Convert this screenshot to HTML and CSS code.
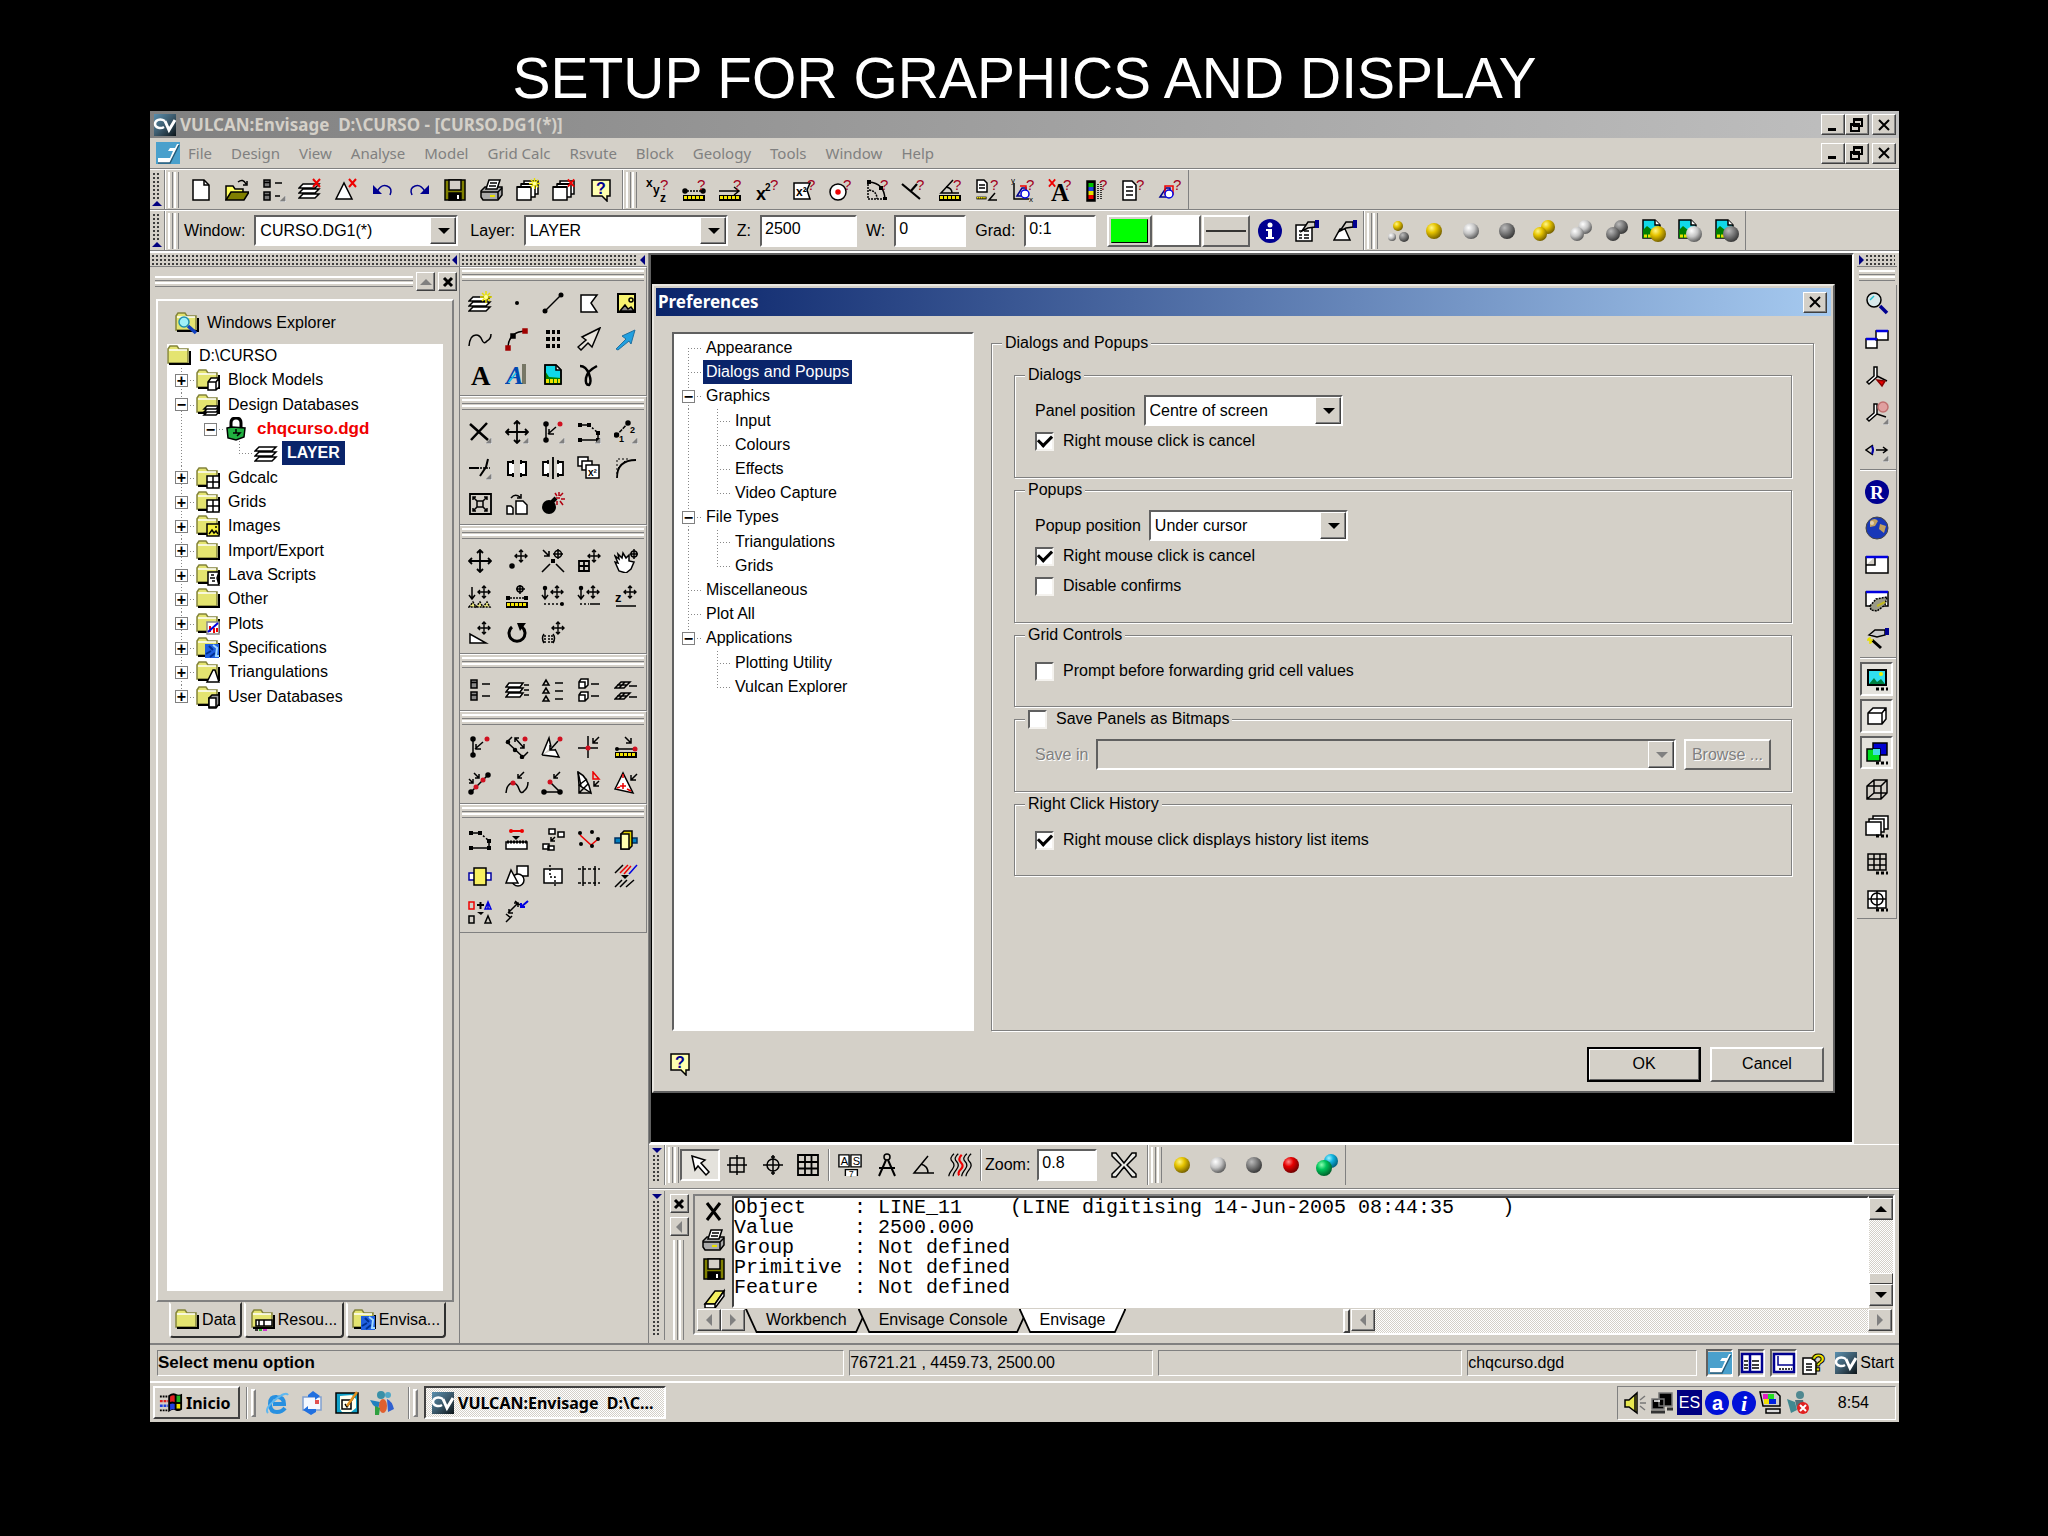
FILE: index.html
```html
<!DOCTYPE html>
<html lang="en">
  <head>
    <meta charset="UTF-8" />
    <meta name="viewport" content="width=device-width, initial-scale=1.0" />
    <title>Setup for graphics and display</title>
    <link rel="stylesheet" href="styles.css">
  </head>
  <body>
    <!-- gradients stay rendered, the symbols below do not -->
    <svg class="paints" width="0" height="0" aria-hidden="true">
      <defs>
        <radialGradient id="g-gold" cx=".35" cy=".3" r=".75"><stop offset="0" stop-color="#fff68a"/><stop offset=".4" stop-color="#e6c400"/><stop offset="1" stop-color="#6e5a00"/></radialGradient>
        <radialGradient id="g-silver" cx=".35" cy=".3" r=".75"><stop offset="0" stop-color="#fff"/><stop offset=".5" stop-color="#c4c4c4"/><stop offset="1" stop-color="#555"/></radialGradient>
        <radialGradient id="g-gray" cx=".35" cy=".3" r=".75"><stop offset="0" stop-color="#bbb"/><stop offset=".5" stop-color="#777"/><stop offset="1" stop-color="#333"/></radialGradient>
        <radialGradient id="g-red" cx=".35" cy=".3" r=".75"><stop offset="0" stop-color="#ff8a8a"/><stop offset=".4" stop-color="#e60000"/><stop offset="1" stop-color="#600"/></radialGradient>
        <radialGradient id="g-green" cx=".35" cy=".3" r=".75"><stop offset="0" stop-color="#8affb0"/><stop offset=".4" stop-color="#00c45a"/><stop offset="1" stop-color="#005a28"/></radialGradient>
        <radialGradient id="g-cyan" cx=".35" cy=".3" r=".75"><stop offset="0" stop-color="#a0f4ff"/><stop offset=".4" stop-color="#10b4e0"/><stop offset="1" stop-color="#005a78"/></radialGradient>
        <linearGradient id="g-cv" x2="1" y2="1"><stop offset="0" stop-color="#5a8fae"/><stop offset=".5" stop-color="#3c5a6c"/><stop offset="1" stop-color="#0c1418"/></linearGradient>
      </defs>
    </svg>
    <!-- icon sprite -->
    <svg class="sprite" aria-hidden="true">
      <!-- shared parts -->
      <symbol id="q" viewBox="0 0 24 24"><text x="15" y="12" class="glyph" font-size="15" fill="#a00020">?</text></symbol>
      <symbol id="corner" viewBox="0 0 24 24"><path d="M17 24h7v-7z" fill="#808080" stroke="none"/><path d="M17 24h7v-7" stroke="#fff" stroke-width="1"/></symbol>
      <symbol id="mv" viewBox="0 0 14 14"><path d="M7 1v12M1 7h12M5 3l2-2 2 2M5 11l2 2 2-2M3 5L1 7l2 2M11 5l2 2-2 2" stroke-width="1.4"/></symbol>
      <symbol id="ruler" viewBox="0 0 24 8"><path d="M1 1h22v6H1z" fill="#000" stroke="none"/><path d="M2 3.5h20" stroke="#f4e400" stroke-width="3" stroke-dasharray="3 1"/></symbol>
      <symbol id="star" viewBox="0 0 12 12"><path d="M6 0v12M0 6h12M2 2l8 8M10 2l-8 8" stroke="#e8e000" stroke-width="1.5"/><circle cx="6" cy="6" r="2" fill="#ffffa0" stroke="none"/></symbol>
      <symbol id="redx" viewBox="0 0 10 10"><path d="M1 1l7 8M8 1L1 9" stroke="#e00" stroke-width="2"/></symbol>
      <symbol id="cv" viewBox="0 0 24 24"><path d="M1 1h22v22H1z" fill="url(#g-cv)" stroke="none"/><path d="M12 8c-5-3-10-1-10 3s6 5 9 3" stroke="#fff" stroke-width="2.4"/><path d="M12 8l4 9 6-10" stroke="#fff" stroke-width="3"/></symbol>
      <symbol id="env" viewBox="0 0 24 24"><path d="M0 1h24v22H0z" fill="#4aa0cc" stroke="none"/><path d="M2 17h14l-2 5H2zM14 17l3-7h-5l2-3h5l2-4h2l-6 14z" fill="#fff" stroke="none"/><path d="M2 22h12l9-18" stroke="#245a78"/></symbol>
      <!-- main toolbar -->
      <symbol id="new" viewBox="0 0 24 24"><path d="M4 2h11l5 5v15H4z" fill="#fff"/><path d="M15 2v5h5"/></symbol>
      <symbol id="open" viewBox="0 0 24 24"><path d="M1 22V8h7l2 3h8v3" fill="#ffff60"/><path d="M1 22l5-8h18l-5 8z" fill="#808000"/><path d="M13 4q5-4 8 2M22 3v4h-4"/></symbol>
      <symbol id="dblist" viewBox="0 0 24 24"><path d="M2 2h6v7H2zM2 14h6v8H2z" fill="#777"/><path d="M2 4.500h6M2 17h6M13 5h7M13 18h5"/><use href="#corner"/></symbol>
      <symbol id="layersx" viewBox="0 0 24 24"><path d="M1 20h16l4-4H5zM1 15h16l4-4H5zM1 10h16l4-4H5z" fill="#fff"/><use href="#redx" x="14" y="0" width="10" height="10"/></symbol>
      <symbol id="trix" viewBox="0 0 24 24"><path d="M2 21h16L10 5z" fill="#fff"/><use href="#redx" x="14" y="0" width="10" height="10"/></symbol>
      <symbol id="undo" viewBox="0 0 24 24"><path d="M6 14q4-8 10-6t3 9" stroke="#000090"/><path d="M2 7v9h9z" fill="#000090" stroke="none"/></symbol>
      <symbol id="redo" viewBox="0 0 24 24"><path d="M18 14q-4-8-10-6t-3 9" stroke="#000090"/><path d="M22 7v9h-9z" fill="#000090" stroke="none"/></symbol>
      <symbol id="save" viewBox="0 0 24 24"><path d="M2 2h20v20H2z" fill="#808000"/><path d="M6 2h12v10H6z" fill="#d4d0c8"/><path d="M6 15h12v7H6z" fill="#000"/><path d="M15 17v4" stroke="#fff" stroke-width="2"/></symbol>
      <symbol id="print" viewBox="0 0 24 24"><path d="M1 13l4-4h17v8l-4 5H3l-2-3z" fill="#aaa"/><path d="M6 11l3-9h11l-3 9z" fill="#fff"/><path d="M10 5h7M9 8h7M1 14h17v7M18 14l4-4"/><path d="M10 18h5" stroke="#e8e000" stroke-width="2"/></symbol>
      <symbol id="winnew" viewBox="0 0 24 24"><path d="M8 3h14v13H8z" fill="#fff"/><path d="M5 6h14v13H5z" fill="#fff"/><path d="M1 9h14v13H1z" fill="#fff"/><path d="M1 9h14M5 6h14" stroke-width="2"/><use href="#star" x="13" y="0" width="11" height="11"/></symbol>
      <symbol id="winx" viewBox="0 0 24 24"><path d="M8 3h14v13H8z" fill="#fff"/><path d="M5 6h14v13H5z" fill="#fff"/><path d="M1 9h14v13H1z" fill="#fff"/><path d="M1 9h14M5 6h14" stroke-width="2"/><use href="#redx" x="15" y="0" width="9" height="10"/></symbol>
      <symbol id="help" viewBox="0 0 24 24"><path d="M3 2h18v16h-3v5l-5-5H3z" fill="#ffffb0"/><text x="7" y="16" class="glyph bold" font-size="16" fill="#000090">?</text></symbol>
      <!-- query toolbar -->
      <symbol id="xyz" viewBox="0 0 24 24"><text x="1" y="9" class="glyph bold" font-size="12">x</text><text x="8" y="16" class="glyph bold" font-size="12">y</text><text x="15" y="24" class="glyph bold" font-size="12">z</text><use href="#q"/></symbol>
      <symbol id="qdist" viewBox="0 0 24 24"><path d="M2 13h20" stroke-dasharray="2 1"/><circle cx="3" cy="13" r="2" fill="#000"/><circle cx="21" cy="13" r="2" fill="#000"/><use href="#ruler" y="16" width="24" height="8"/><use href="#q"/></symbol>
      <symbol id="qline" viewBox="0 0 24 24"><path d="M1 13h19M16 9l5 4-5 4"/><use href="#ruler" y="16" width="24" height="8"/><use href="#q"/></symbol>
      <symbol id="qx2" viewBox="0 0 24 24"><text x="1" y="22" class="glyph bold" font-size="18">x</text><text x="10" y="13" class="glyph bold" font-size="10">2</text><use href="#q"/></symbol>
      <symbol id="qbox" viewBox="0 0 24 24"><path d="M2 5h16l-3 7 3 9H2z" fill="#fff"/><text x="4" y="18" class="glyph bold" font-size="12">x²</text><use href="#q"/></symbol>
      <symbol id="qcirc" viewBox="0 0 24 24"><circle cx="10" cy="14" r="8" fill="#fff"/><circle cx="10" cy="14" r="2" fill="#e00" stroke="#e00"/><use href="#q"/></symbol>
      <symbol id="qarc" viewBox="0 0 24 24"><path d="M4 4q15 1 16 17"/><path d="M3 6v15h16M4 12q8 1 8 9" stroke-dasharray="2 1"/><path d="M2 2h4v4H2zM14 8h4v4h-4zM18 19h4v3h-4z" fill="#000" stroke="none"/><use href="#q"/></symbol>
      <symbol id="qperp" viewBox="0 0 24 24"><path d="M1 6l18 15M9 14L16 6" stroke-width="2.200"/><use href="#q"/></symbol>
      <symbol id="qang" viewBox="0 0 24 24"><path d="M15 2L3 15h18M8 9q6 1 6 6"/><use href="#ruler" y="16" width="24" height="8"/><use href="#q"/></symbol>
      <symbol id="qdoc2" viewBox="0 0 24 24"><path d="M2 2h7l3 3v9H2z" fill="#fff"/><path d="M4 7h6M4 10h6M22 22h-8l6-7"/><use href="#ruler" x="1" y="16" width="11" height="8"/><use href="#q"/></symbol>
      <symbol id="qplot" viewBox="0 0 24 24"><path d="M3 5v16h15"/><path d="M6 18l5-8h4v8z" stroke="#000090"/><path d="M9 8h6v7" stroke="#e00"/><circle cx="14" cy="16" r="4" fill="#fff" stroke="#0000e0"/><text x="0" y="5" class="glyph" font-size="8">y</text><text x="18" y="24" class="glyph" font-size="8">x</text><use href="#q"/></symbol>
      <symbol id="qtext" viewBox="0 0 24 24"><text x="3" y="23" class="serif" font-size="25">A</text><use href="#redx" x="0" y="0" width="9" height="10"/><use href="#q"/></symbol>
      <symbol id="qscale" viewBox="0 0 24 24"><path d="M3 3h8v20H3z" fill="#000"/><path d="M7 5v4" stroke="#00c000" stroke-width="5"/><path d="M7 9v4" stroke="#2040e0" stroke-width="5"/><path d="M7 13v4" stroke="#e8e000" stroke-width="5"/><path d="M7 17v4" stroke="#e00" stroke-width="5"/><path d="M14 6v15M17 6v15" stroke-dasharray="1 1"/><use href="#q"/></symbol>
      <symbol id="qdoc" viewBox="0 0 24 24"><path d="M2 3h9l4 4v15H2z" fill="#fff"/><path d="M5 9h7M5 13h7M5 17h7"/><use href="#q"/></symbol>
      <symbol id="qshape" viewBox="0 0 24 24"><path d="M2 19l6-9h4v9z" stroke="#000090"/><path d="M7 8h8v8H7z" stroke="#e00"/><circle cx="11" cy="16" r="4" fill="#fff" stroke="#0000e0"/><use href="#q"/></symbol>
      <!-- attributes toolbar -->
      <symbol id="line" viewBox="0 0 40 24"><path d="M0 12h40"/></symbol>
      <symbol id="info" viewBox="0 0 24 24"><circle cx="12" cy="12" r="12" fill="#000090" stroke="none"/><path d="M8 10h6v8h2v2H8v-2h2v-6H8z" fill="#fff" stroke="none"/><circle cx="12" cy="6" r="2.500" fill="#fff" stroke="none"/></symbol>
      <symbol id="docpen" viewBox="0 0 24 24"><path d="M1 6h16v16H1z" fill="#fff"/><path d="M4 12h3M9 12h5M4 16h3M9 16h5M4 19h3M9 19h5"/><path d="M7 12l6-9h7v5l-7 1z" fill="#d4d0c8"/><path d="M20 1h4v8h-4z" fill="#000090" stroke="none"/></symbol>
      <symbol id="tripen" viewBox="0 0 24 24"><path d="M1 21h16l-5-11H7z" fill="#fff"/><path d="M7 12l6-9h7v5l-7 1z" fill="#d4d0c8"/><path d="M20 1h4v8h-4z" fill="#000090" stroke="none"/></symbol>
      <!-- render balls -->
      <symbol id="b-three" viewBox="0 0 24 24"><g stroke="none"><circle cx="12" cy="7" r="5" fill="url(#g-gold)"/><circle cx="6" cy="18" r="4" fill="url(#g-silver)"/><circle cx="18" cy="18" r="5" fill="url(#g-gray)"/></g></symbol>
      <symbol id="b-gold" viewBox="0 0 24 24"><circle cx="12" cy="12" r="8" fill="url(#g-gold)" stroke="none"/></symbol>
      <symbol id="b-silver" viewBox="0 0 24 24"><circle cx="12" cy="12" r="8" fill="url(#g-silver)" stroke="none"/></symbol>
      <symbol id="b-gray" viewBox="0 0 24 24"><circle cx="12" cy="12" r="8" fill="url(#g-gray)" stroke="none"/></symbol>
      <symbol id="b-red" viewBox="0 0 24 24"><circle cx="12" cy="12" r="8" fill="url(#g-red)" stroke="none"/></symbol>
      <symbol id="b-gold2" viewBox="0 0 24 24"><g fill="url(#g-gold)" stroke="none"><circle cx="16" cy="8" r="7"/><circle cx="8" cy="15" r="7"/></g></symbol>
      <symbol id="b-silver2" viewBox="0 0 24 24"><g fill="url(#g-silver)" stroke="none"><circle cx="16" cy="8" r="7"/><circle cx="8" cy="15" r="7"/></g></symbol>
      <symbol id="b-gray2" viewBox="0 0 24 24"><g fill="url(#g-gray)" stroke="none"><circle cx="16" cy="8" r="7"/><circle cx="8" cy="15" r="7"/></g></symbol>
      <symbol id="b-mix" viewBox="0 0 24 24"><g stroke="none"><circle cx="16" cy="8" r="7" fill="url(#g-cyan)"/><circle cx="9" cy="15" r="8" fill="url(#g-green)"/></g></symbol>
      <symbol id="pic" viewBox="0 0 24 24"><path d="M1 1h12l5 5v13H1z" fill="#10d8e8"/><path d="M1 11l4-4 5 4 4 8H1z" fill="#008000" stroke="none"/><path d="M2 17h14" stroke="#e8e000" stroke-width="3" stroke-dasharray="3 1"/><path d="M13 1v5h5" fill="#fff"/></symbol>
      <symbol id="p-gold" viewBox="0 0 24 24"><use href="#pic"/><circle cx="16" cy="15" r="8" fill="url(#g-gold)" stroke="none"/></symbol>
      <symbol id="p-silver" viewBox="0 0 24 24"><use href="#pic"/><circle cx="16" cy="15" r="8" fill="url(#g-silver)" stroke="none"/></symbol>
      <symbol id="p-gray" viewBox="0 0 24 24"><use href="#pic"/><circle cx="16" cy="15" r="8" fill="url(#g-gray)" stroke="none"/></symbol>
      <!-- folders -->
      <symbol id="folder" viewBox="0 0 24 24"><path d="M1 5l2-3h7l2 3h9v14H1z" fill="#e4e470" stroke="#84843c"/><path d="M2 20h21V7" stroke-width="2"/><path d="M2 6h18" stroke="#fff"/></symbol>
      <symbol id="f-find" viewBox="0 0 24 24"><use href="#folder"/><circle cx="9" cy="11" r="5" fill="#a0f0f8" stroke="#2090b0"/><path d="M13 15l8 7" stroke="#1040c0" stroke-width="3.500"/></symbol>
      <symbol id="f-block" viewBox="0 0 24 24"><use href="#folder"/><path d="M12 14l3-4h8v9l-3 3h-8zM12 14h8v8M20 14l3-4" fill="#fff"/></symbol>
      <symbol id="f-layers" viewBox="0 0 24 24"><use href="#folder"/><path d="M8 16l3-3h12l-3 3zM8 19l3-3h12l-3 3zM8 22l3-3h12l-3 3z" fill="#fff"/></symbol>
      <symbol id="f-grid" viewBox="0 0 24 24"><use href="#folder"/><path d="M11 10h12v12H11zM17 10v12M11 16h12" fill="#fff"/></symbol>
      <symbol id="f-image" viewBox="0 0 24 24"><use href="#folder"/><path d="M11 10h12v12H11z" fill="#f4f040"/><path d="M13 20l3-4 2 3 2-2 2 3M19 13h2"/></symbol>
      <symbol id="f-script" viewBox="0 0 24 24"><use href="#folder"/><path d="M12 9h11l-2 6 2 7H12z" fill="#fff"/><path d="M15 12h3M14 15h5M16 18h3"/></symbol>
      <symbol id="f-plot" viewBox="0 0 24 24"><use href="#folder"/><path d="M11 10h12v12H11z" fill="#fff" stroke="#888"/><path d="M14 20v-6M18 21v-5M21 20v-4" stroke="#e00" stroke-width="2"/><path d="M12 20l10-9" stroke="#0000e0" stroke-width="2"/></symbol>
      <symbol id="f-spec" viewBox="0 0 24 24"><use href="#folder"/><path d="M9 8h14v14H9z" fill="#2060e0" stroke="none"/><path d="M10 18l5-3M14 21l5-4M13 10l4 4" stroke="#003090" stroke-width="2"/><path d="M17 9l4 3-1 8h3" stroke="#a0d8ff" stroke-width="2"/></symbol>
      <symbol id="f-tri" viewBox="0 0 24 24"><use href="#folder"/><path d="M11 22l6-12 2 0 4 12z" fill="#fff"/></symbol>
      <symbol id="f-user" viewBox="0 0 24 24"><use href="#folder"/><path d="M13 13l3-3h7v9l-3 4h-7z" fill="#999"/><path d="M13 13h7v9h-7z" fill="#fff"/></symbol>
      <symbol id="f-res" viewBox="0 0 24 24"><use href="#folder"/><path d="M5 12h16v6H5z" fill="#fff"/><path d="M8 12v6M13 12v6M4 22h3" /><path d="M8 22h3" stroke="#0a0"/><path d="M12 22h4" stroke="#c0c"/></symbol>
      <symbol id="lock" viewBox="0 0 24 24"><path d="M6 11V6q0-5 5-5t5 5v5" stroke-width="3"/><path d="M2 11l5-1 13 1-1 9-8 3-8-2z" fill="#20b040"/><path d="M11 12v4M8 16h7l-3 3"/></symbol>
      <symbol id="layers" viewBox="0 0 24 24"><path d="M1 20h17l4-4H5zM1 15h17l4-4H5zM1 10h17l4-4H5z" fill="#fff"/></symbol>
      <!-- draw tools -->
      <symbol id="layernew" viewBox="0 0 24 24"><use href="#layers" width="24" height="24"/><use href="#star" x="12" y="0" width="12" height="12"/></symbol>
      <symbol id="dot" viewBox="0 0 24 24"><circle cx="12" cy="12" r="2" fill="#000" stroke="none"/></symbol>
      <symbol id="seg" viewBox="0 0 24 24"><path d="M4 20L20 4"/><circle cx="4" cy="20" r="2.500" fill="#000" stroke="none"/><circle cx="20" cy="4" r="2.500" fill="#000" stroke="none"/></symbol>
      <symbol id="poly" viewBox="0 0 24 24"><path d="M4 4h16l-6 8 6 9H4z" fill="#fff"/></symbol>
      <symbol id="image" viewBox="0 0 24 24"><path d="M4 3h17v18H4z" fill="#f8f470" stroke-width="2"/><path d="M6 20l5-6 3 4 3-2 3 4z" fill="#888"/><circle cx="17" cy="9" r="2"/></symbol>
      <symbol id="curve" viewBox="0 0 24 24"><path d="M1 19q1-11 7-11 4 0 6 5t5 1q4-2 4-7"/></symbol>
      <symbol id="arc" viewBox="0 0 24 24"><path d="M3 20Q4 5 20 4"/><path d="M18 2h4v4h-4zM1 19h4v4H1z" fill="#a00000" stroke="#a00000"/><path d="M6 7h4v4H6z" fill="#000"/></symbol>
      <symbol id="dots9" viewBox="0 0 24 24"><path d="M5 5h14M5 12h14M5 19h14" stroke-width="4" stroke-dasharray="4 2 3 2"/></symbol>
      <symbol id="bigarrow" viewBox="0 0 24 24"><path d="M23 1L5 10l4 3-8 7 3 3 7-7 4 4z" fill="#e8e4dc"/></symbol>
      <symbol id="bluearrow" viewBox="0 0 24 24"><path d="M21 3L8 9l4 3L2 22l2 1 11-9 2 3z" fill="#20a0e0" stroke="#2070a0" stroke-width="1"/></symbol>
      <symbol id="bigA" viewBox="0 0 24 24"><text x="3" y="22" class="serif" font-size="27">A</text></symbol>
      <symbol id="a3d" viewBox="0 0 24 24"><path d="M17 1h4v20h-4z" fill="#776" stroke="none"/><text x="1" y="21" class="serif italic" font-size="26" fill="#0048b0">A</text><path d="M4 19l7-9" stroke="#10c0f0"/></symbol>
      <symbol id="picpage" viewBox="0 0 24 24"><path d="M4 2h11l5 5v14H4z" fill="#10d8e8"/><path d="M4 8l4 6 12 1v6H4z" fill="#008000" stroke="none"/><path d="M5 18h14" stroke="#f0e000" stroke-width="4" stroke-dasharray="3 1"/><path d="M15 2v5h5" fill="#fff"/><path d="M4 2h11l5 5v14H4z"/></symbol>
      <symbol id="loop" viewBox="0 0 24 24"><path d="M3 3q6 0 9 8t0 11q-4 0-3-7T20 3" stroke-width="2.500"/></symbol>
      <!-- edit tools -->
      <symbol id="del" viewBox="0 0 24 24"><path d="M2 4l18 16M19 3L3 20" stroke-width="2.500"/><use href="#corner"/></symbol>
      <symbol id="move" viewBox="0 0 24 24"><path d="M12 1v22M1 12h22M9 4l3-3 3 3M9 20l3 3 3-3M4 9l-3 3 3 3M20 9l3 3-3 3" stroke-width="1.800"/></symbol>
      <symbol id="movec" viewBox="0 0 24 24"><use href="#move"/><use href="#corner"/></symbol>
      <symbol id="ptmove" viewBox="0 0 24 24"><path d="M5 4v17M15 7l-8 7M8 9v5h5"/><circle cx="5" cy="4" r="2" fill="#000"/><circle cx="5" cy="20" r="2" fill="#000"/><circle cx="19" cy="4" r="2.500" fill="#d01020" stroke="none"/></symbol>
      <symbol id="ptmovec" viewBox="0 0 24 24"><use href="#ptmove"/><use href="#corner"/></symbol>
      <symbol id="open4" viewBox="0 0 24 24"><path d="M3 5h9M3 20h18v-7"/><path d="M12 5l8 7" stroke-dasharray="2 2"/><path d="M1 3h4v4H1zM10 3h4v4h-4zM1 18h4v4H1zM19 18h4v4h-4zM19 11h4v4h-4z" fill="#000" stroke="none"/></symbol>
      <symbol id="open4c" viewBox="0 0 24 24"><use href="#open4"/><use href="#corner"/></symbol>
      <symbol id="seg12" viewBox="0 0 24 24"><path d="M2 16L14 3" stroke-dasharray="4 1"/><circle cx="2.500" cy="15" r="2" fill="#000"/><circle cx="14" cy="3" r="2" fill="#000"/><text x="5" y="22" class="glyph bold" font-size="9">1</text><text x="16" y="13" class="glyph bold" font-size="9">2</text><use href="#corner"/></symbol>
      <symbol id="trim" viewBox="0 0 24 24"><path d="M1 12h10M12 20l6-9 2-8" stroke-width="2"/><path d="M12 12h10" stroke-dasharray="2 1"/><use href="#corner"/></symbol>
      <symbol id="split" viewBox="0 0 24 24"><path d="M9 6H3v13h6zM15 6h6v13h-6z" fill="#fff" stroke="none"/><path d="M9 6H3v13h6M15 6h6v13h-6M8 4v4M8 17v4M16 4v4M16 17v4" stroke-width="2"/></symbol>
      <symbol id="mirror" viewBox="0 0 24 24"><path d="M8 6H2v13h6zM16 6h6v13h-6z" fill="#fff" stroke="none"/><path d="M8 6H2v13h6M16 6h6v13h-6M7 4v4M7 17v4M17 4v4M17 17v4M12 1v22" stroke-width="1.800"/></symbol>
      <symbol id="copies" viewBox="0 0 24 24"><path d="M1 1h10v9H1z" fill="#fff"/><path d="M5 5h10v9H5z" fill="#fff"/><path d="M9 9h13v13H9z" fill="#fff"/><text x="11" y="20" class="glyph bold" font-size="10">x²</text></symbol>
      <symbol id="fillet" viewBox="0 0 24 24"><path d="M3 22Q3 4 22 4" stroke-width="1.800"/><path d="M3 18V3h12M4 12l8-8" stroke-dasharray="2 2" stroke-width="1"/></symbol>
      <symbol id="fit" viewBox="0 0 24 24"><path d="M2 2h21v20H2z" stroke-width="1.800"/><path d="M9 9h6v6H9zM9 9L5 5M15 9l4-4M9 15l-4 4M15 15l4 4M5 8V5h3M16 5h3v3M5 16v3h3M16 19h3v-3"/></symbol>
      <symbol id="scale2" viewBox="0 0 24 24"><path d="M2 14h4l2 2v6H2zM11 9h7l4 4v9H11z" fill="#fff"/><path d="M6 6q4-5 9-1M16 2v4h-4"/></symbol>
      <symbol id="bomb" viewBox="0 0 24 24"><circle cx="8" cy="15" r="7" fill="#000" stroke="none"/><path d="M11 10l4-4" stroke-width="4"/><path d="M15 6h4M14 1l2 3M18 0v4M22 1l-3 3M20 7h4M19 9l3 4M16 9v4" stroke="#b00010"/></symbol>
      <!-- move tools -->
      <symbol id="mvdot" viewBox="0 0 24 24"><circle cx="7" cy="17" r="2" fill="#000"/><use href="#mv" x="9" y="0" width="14" height="14"/></symbol>
      <symbol id="mvx" viewBox="0 0 24 24"><path d="M1 23l8-8M15 15l8 8M2 1l6 6M8 2v5H3" stroke-width="1.600"/><path d="M10 10h4v4h-4z" fill="#000" stroke="none"/><circle cx="17" cy="5" r="3.500"/><path d="M17 0v10M12 5h10"/></symbol>
      <symbol id="mvgrid" viewBox="0 0 24 24"><path d="M2 12h10v10H2zM7 12v10M2 17h10" stroke-width="1.800"/><use href="#mv" x="10" y="0" width="14" height="14"/></symbol>
      <symbol id="mvhand" viewBox="0 0 24 24"><path d="M5 22l-4-9 3 1-3-7 4 3-1-5 4 4 1-5 3 5 3-3v6l5 1-3 7-5 4z" fill="#fff"/><circle cx="20" cy="5" r="3"/><path d="M20 0v10M16 5h8"/></symbol>
      <symbol id="mvsurf" viewBox="0 0 24 24"><path d="M4 2v11M1 10l3 4 3-4"/><use href="#mv" x="9" y="0" width="14" height="14"/><path d="M1 22l4-5 3 5 4-5 3 5 4-5 3 5z" fill="#f0ec80" stroke-dasharray="2 1"/></symbol>
      <symbol id="mvrule" viewBox="0 0 24 24"><circle cx="15" cy="4" r="3"/><path d="M15 0v9M11 4h9"/><path d="M2 13h20" stroke-dasharray="2 1"/><path d="M1 11h4v4H1zM19 11h4v4h-4z" fill="#000" stroke="none"/><use href="#ruler" y="16" width="24" height="8"/></symbol>
      <symbol id="mvdown" viewBox="0 0 24 24"><path d="M4 4v9M1 10l3 4 3-4"/><circle cx="4" cy="3" r="1.500" fill="#000"/><use href="#mv" x="9" y="0" width="14" height="14"/><path d="M3 19h18" stroke-dasharray="2 2"/><circle cx="21" cy="19" r="2" fill="#000" stroke="none"/></symbol>
      <symbol id="mvdown2" viewBox="0 0 24 24"><path d="M4 4v9M1 10l3 4 3-4"/><circle cx="4" cy="3" r="1.500" fill="#000"/><use href="#mv" x="9" y="0" width="14" height="14"/><path d="M3 19h9" stroke-dasharray="2 2"/><path d="M13 19h10"/></symbol>
      <symbol id="mvz" viewBox="0 0 24 24"><text x="1" y="17" class="glyph bold" font-size="13">z</text><use href="#mv" x="9" y="0" width="14" height="14"/><path d="M2 21h20"/></symbol>
      <symbol id="mvtri" viewBox="0 0 24 24"><path d="M2 13v9h16z" fill="#fff"/><use href="#mv" x="9" y="0" width="14" height="14"/></symbol>
      <symbol id="rotate" viewBox="0 0 24 24"><path d="M7 6a8 8 0 1 0 10 0" stroke-width="3"/><path d="M12 2h9l-6 8z" fill="#000" stroke="none"/></symbol>
      <symbol id="mvscale" viewBox="0 0 24 24"><path d="M3 13q-3 4 0 9M12 13q3 4 0 9"/><path d="M4 14v8M8 14v8M11 14v8" stroke-dasharray="2 1"/><use href="#mv" x="10" y="0" width="14" height="14"/></symbol>
      <!-- lists -->
      <symbol id="l-db" viewBox="0 0 24 24"><path d="M3 2h6v8H3zM3 14h6v8H3z" fill="#888"/><path d="M3 4.500h6M3 17h6M14 6h8M14 18h8"/></symbol>
      <symbol id="l-layer" viewBox="0 0 24 24"><path d="M1 19h14l3-4H4zM1 14h14l3-4H4zM1 9h14l3-4H4z" fill="#fff"/><path d="M19 7h5M19 12h5M19 17h5"/></symbol>
      <symbol id="l-tri" viewBox="0 0 24 24"><path d="M2 7h6L5 2zM2 15h6l-3-5zM2 23h6l-3-5zM14 5h8M14 13h8M14 21h8"/></symbol>
      <symbol id="l-block" viewBox="0 0 24 24"><path d="M2 4l2-3h7v6l-3 3H2zM2 4h6v6M2 17l2-3h7v6l-3 3H2zM2 17h6v6" fill="#fff"/><path d="M14 6h8M14 18h8"/></symbol>
      <symbol id="l-grid" viewBox="0 0 24 24"><path d="M1 10l6-6h9l-6 6zM1 21l6-6h9l-6 6zM5 10l6-6M3 7h10M5 21l6-6M3 18h10M15 8h8M15 19h8"/></symbol>
      <!-- snaps -->
      <symbol id="s-off" viewBox="0 0 24 24"><path d="M2 7l16 15M1 8l6-6M17 23l6-6" /><path d="M10 3l9 10M10 7V3h4M15 13h4V9" /><circle cx="20" cy="4" r="2.500" fill="#d01020" stroke="none"/><circle cx="3" cy="7" r="1.500" fill="#000"/><circle cx="10" cy="15" r="1.500" fill="#000"/><circle cx="17" cy="22" r="1.500" fill="#000"/></symbol>
      <symbol id="s-tri" viewBox="0 0 24 24"><path d="M1 20L8 3l2 9M1 20l17 2-4-8" fill="#fff"/><path d="M17 6l-8 9M9 10v5h5"/><circle cx="19" cy="4" r="2.500" fill="#d01020" stroke="none"/></symbol>
      <symbol id="s-cross" viewBox="0 0 24 24"><path d="M11 1v22M1 13h20M22 2l-6 6M16 3v5h5"/><circle cx="11" cy="13" r="2.500" fill="#d01020" stroke="none"/></symbol>
      <symbol id="s-rule" viewBox="0 0 24 24"><path d="M11 2l6 6M17 3v5h-5M3 14h18"/><circle cx="3" cy="14" r="2" fill="#000" stroke="none"/><circle cx="21" cy="14" r="2.500" fill="#d01020" stroke="none"/><use href="#ruler" y="16" width="24" height="8"/></symbol>
      <symbol id="s-seg" viewBox="0 0 24 24"><path d="M3 21L20 4M6 2l5 5M11 3v4H7M1 8l4 4M5 8v4H1"/><circle cx="3" cy="21" r="2" fill="#000"/><circle cx="20" cy="4" r="2" fill="#000"/><circle cx="8" cy="16" r="2.500" fill="#d01020" stroke="none"/><circle cx="15" cy="9" r="2.500" fill="#d01020" stroke="none"/></symbol>
      <symbol id="s-curve" viewBox="0 0 24 24"><path d="M1 22q1-10 7-10 4 0 6 6t5 2q4-3 4-9M19 1l-6 6M13 3v4h4"/><circle cx="8" cy="12" r="2.500" fill="#d01020" stroke="none"/></symbol>
      <symbol id="s-v" viewBox="0 0 24 24"><path d="M19 1l-6 6M13 3v4h4M9 11l10 10M3 21h17"/><circle cx="9" cy="11" r="2.500" fill="#d01020" stroke="none"/><circle cx="3" cy="21" r="2" fill="#000"/><circle cx="19" cy="21" r="2" fill="#000"/></symbol>
      <symbol id="s-mesh" viewBox="0 0 24 24"><path d="M1 1q10 5 13 21L2 14z" fill="#fff"/><path d="M2 14l8-6M2 14v8h12M2 22l9-9M1 1l3 14"/><path d="M22 10l-5 5M17 10v5h5"/><path d="M16 1v7h6z" stroke="#e00"/></symbol>
      <symbol id="s-tri2" viewBox="0 0 24 24"><path d="M1 18L9 2l10 20z" fill="#fff"/><path d="M6 15h6M9 12v6M9 3v4M17 20l-4-2M3 17l3-1" stroke="#e00"/><path d="M23 3l-6 6M17 4v5h5"/></symbol>
      <!-- construction -->
      <symbol id="c-arr" viewBox="0 0 24 24"><path d="M6 3h11" stroke="#e00" stroke-width="2"/><circle cx="6" cy="3" r="2" fill="#e00" stroke="none"/><circle cx="17" cy="3" r="2" fill="#e00" stroke="none"/><path d="M7 8h8l-4 4z" fill="#000" stroke="none"/><path d="M1 14h21v7H1z" fill="#fff"/><path d="M2 14h20" stroke-dasharray="2 1" stroke-width="3"/></symbol>
      <symbol id="c-boxes" viewBox="0 0 24 24"><path d="M8 1h6v5H8zM17 4h6v5h-6zM2 16h6v5H2zM7 18h6v4H7z" fill="#fff"/><path d="M14 9l-4 4M10 9v4h4"/></symbol>
      <symbol id="c-pts" viewBox="0 0 24 24"><path d="M3 7l11 10 6-5" stroke="#e00"/><g fill="#000" stroke="none"><circle cx="3" cy="5" r="2"/><circle cx="15" cy="4" r="2"/><circle cx="21" cy="11" r="2"/><circle cx="4" cy="16" r="2"/><circle cx="15" cy="18" r="2"/></g></symbol>
      <symbol id="c-blk" viewBox="0 0 24 24"><path d="M1 10h22v5H1z" fill="#0080c0" stroke="#003060"/><path d="M7 6l3-3h8v15l-3 3H7z" fill="#e0d000"/><path d="M7 6h8v15H7z" fill="#ffffb0"/></symbol>
      <symbol id="c-box" viewBox="0 0 24 24"><path d="M1 9h22v7H1z" fill="#fff" stroke="#0000a0"/><path d="M6 4h12v17H6z" fill="#f8f060"/></symbol>
      <symbol id="c-shapes" viewBox="0 0 24 24"><path d="M12 2h11v10H12z" fill="#fff"/><circle cx="13" cy="16" r="6" fill="#fff"/><path d="M1 19L6 6l7 13z" fill="#fff"/></symbol>
      <symbol id="c-rect" viewBox="0 0 24 24"><path d="M3 5h18v14H3z" fill="#fff"/><path d="M9 1v12h5v10" stroke-dasharray="2 2"/></symbol>
      <symbol id="c-hash" viewBox="0 0 24 24"><path d="M6 2v20M18 2v20"/><path d="M1 5h22M1 19h22" stroke-dasharray="3 2"/></symbol>
      <symbol id="c-hatch" viewBox="0 0 24 24"><path d="M1 9l8-8M1 23l7-7M6 23l7-7M12 23l8-7"/><path d="M6 9l8-8M10 10l7-8" stroke="#e00"/><path d="M15 10l8-9" stroke="#0000e0"/><path d="M7 11h8l-4 4z" fill="#000" stroke="none"/></symbol>
      <symbol id="c-sym" viewBox="0 0 24 24"><path d="M1 2h5v7H1z" stroke="#e00"/><path d="M9 5h7M12.500 2v7" stroke-width="2"/><path d="M17 9h6L20 2zM20 3v6" stroke="#0000e0"/><path d="M9 12h7l-3 3z" fill="#000" stroke="none"/><path d="M1 16h5v7H1zM17 23h6l-3-7z"/></symbol>
      <symbol id="c-meas" viewBox="0 0 24 24"><path d="M3 13L13 3M4 9v4h4M9 3h4v4M1 22l6-6M1 14l5 4M10 1l5 4"/><path d="M23 1l-7 6M16 3v4h4" stroke="#0000e0" stroke-width="2"/></symbol>
      <!-- view rail -->
      <symbol id="v-zoom" viewBox="0 0 24 24"><circle cx="9" cy="9" r="7" fill="#d8e8ea"/><path d="M5 9l4-4" stroke="#20c0d0"/><path d="M15 15l7 7" stroke="#000090" stroke-width="3.500"/></symbol>
      <symbol id="v-pan" viewBox="0 0 24 24"><path d="M11 3h12v9H11zM1 11h11v9H1z" fill="#fff"/><path d="M11 3h12M1 11h11" stroke="#0000e0" stroke-width="2.500"/></symbol>
      <symbol id="v-axis" viewBox="0 0 24 24"><path d="M9 2h3v10l-8 7-2-2 7-6zM12 11l10 5" fill="#fff"/><path d="M12 15l8 1-3 5z" fill="#e00" stroke="#800"/></symbol>
      <symbol id="v-rot" viewBox="0 0 24 24"><path d="M9 3h3v10l-8 7-2-2 7-6zM12 13l9 3" fill="#fff"/><circle cx="18" cy="6" r="5" fill="#e0a0a0" stroke="#c07070"/><use href="#corner"/></symbol>
      <symbol id="v-eye" viewBox="0 0 24 24"><path d="M8 7l-7 5 7 5M11 12h11M18 9l4 3-4 3"/><path d="M7 8q2 4 0 8" stroke="#0000a0" stroke-width="2"/><use href="#corner"/></symbol>
      <symbol id="v-r" viewBox="0 0 24 24"><circle cx="12" cy="12" r="12" fill="#000090" stroke="none"/><text x="5" y="19" class="serif" font-size="19" fill="#fff">R</text></symbol>
      <symbol id="v-globe" viewBox="0 0 24 24"><circle cx="12" cy="12" r="11" fill="#1838b8" stroke="#444" stroke-width="1"/><path d="M5 5q5-4 8 0l-3 5-5 1zM15 8l6 2-2 7-5-4z" fill="#c0a060" stroke="none"/><circle cx="7" cy="7" r="2" fill="#fff" stroke="none" opacity=".5"/></symbol>
      <symbol id="v-win" viewBox="0 0 24 24"><path d="M1 4h22v16H1zM1 12h9V4" fill="#fff"/><path d="M1 4h22" stroke="#0000e0" stroke-width="2.500"/></symbol>
      <symbol id="v-winbrush" viewBox="0 0 24 24"><path d="M1 3h22v14H1z" fill="#fff"/><path d="M1 3h22" stroke="#0000e0" stroke-width="2.500"/><path d="M5 17l6-7 11-2-2 8-8 6-6-1z" fill="#9a9a88" stroke-dasharray="2 1"/><path d="M12 17l8-4" stroke="#c0b820" stroke-width="2"/></symbol>
      <symbol id="v-wand" viewBox="0 0 24 24"><path d="M4 9l6-5 10 0v5l-8 2z" fill="#ccc"/><path d="M20 2h4v7h-4z" fill="#000090" stroke="none"/><path d="M7 14l9 8" stroke-width="3"/><path d="M2 14h6M5 11v7M3 12l4 5" stroke="#e8e000"/></symbol>
      <symbol id="v-img" viewBox="0 0 24 24"><path d="M3 3h18v15H3z" fill="#30e0f0" stroke-width="2"/><path d="M4 17l5-6 3 4 4-3 4 5z" fill="#008040" stroke="none"/><circle cx="16" cy="7" r="2" fill="#f0f000" stroke="none"/><path d="M11 22h12" stroke-width="3" stroke-dasharray="3 2"/></symbol>
      <symbol id="v-cube" viewBox="0 0 24 24"><path d="M3 9l5-5h13v11l-4 5H3zM3 9h14v11M17 9l4-5" fill="#fff"/></symbol>
      <symbol id="v-over" viewBox="0 0 24 24"><path d="M8 2h14v12H8z" fill="#0000d0"/><path d="M2 8h13v12H2z" fill="#00e020"/><path d="M8 8h7v6H8z" fill="#40e0e0" stroke="none"/><path d="M11 22h12" stroke-width="3" stroke-dasharray="3 2"/></symbol>
      <symbol id="v-wire" viewBox="0 0 24 24"><path d="M2 8l7-6h13v13l-6 6H2zM2 8h14v13M16 8l6-6M9 2v13L2 21M9 15h13"/></symbol>
      <symbol id="v-stack" viewBox="0 0 24 24"><path d="M8 2h15v13H8z" fill="#fff"/><path d="M4 5h15v13H4z" fill="#fff"/><path d="M1 8h15v13H1z" fill="#fff"/><path d="M11 22h12" stroke-width="3" stroke-dasharray="3 2"/></symbol>
      <symbol id="v-grid" viewBox="0 0 24 24"><path d="M3 3h18v16H3zM9 3v16M15 3v16M3 8h18M3 14h18"/><path d="M11 22h12" stroke-width="3" stroke-dasharray="3 2"/></symbol>
      <symbol id="v-target" viewBox="0 0 24 24"><path d="M3 3h18v17H3z" fill="#fff"/><circle cx="12" cy="11" r="6"/><path d="M12 3v17M3 11h18"/><path d="M11 22h12" stroke-width="3" stroke-dasharray="3 2"/></symbol>
      <!-- digitise bar -->
      <symbol id="d-arrow" viewBox="0 0 24 24"><path d="M4 3l13 4-4 3 8 9-3 3-8-9-3 4z" fill="#fff"/></symbol>
      <symbol id="d-sq" viewBox="0 0 24 24"><path d="M5 5h14v14H5zM12 2v20M2 12h20"/></symbol>
      <symbol id="d-circ" viewBox="0 0 24 24"><circle cx="12" cy="12" r="6"/><path d="M12 2v20M2 12h20M10 4h4M10 20h4"/></symbol>
      <symbol id="d-grid" viewBox="0 0 24 24"><path d="M2 2h20v20H2zM9 2v20M15.500 2v20M2 9h20M2 15.500h20" stroke-width="1.800"/></symbol>
      <symbol id="d-keys" viewBox="0 0 26 26"><path d="M1 2h11v13H1zM14 2h11v13H14zM8 25v-7h13v7" fill="#fff"/><text x="3" y="13" class="glyph" font-size="12">A</text><text x="16" y="13" class="glyph" font-size="12">S</text><text x="12" y="26" class="glyph" font-size="9">7</text></symbol>
      <symbol id="d-comp" viewBox="0 0 24 24"><circle cx="12" cy="4" r="3"/><path d="M11 7L4 23M13 7l7 16M4 15h16" stroke-width="2"/></symbol>
      <symbol id="d-ang" viewBox="0 0 24 24"><path d="M17 3L3 20h20M10 11q7 2 7 9"/></symbol>
      <symbol id="d-wave" viewBox="0 0 28 28"><path d="M7 1q-6 5-2 9t0 9-4 8M27 1q-6 5-2 9t0 9-4 8M12 1q-6 5-2 9t0 9-4 8M22 1q-6 5-2 9t0 9-4 8"/><path d="M16 2q-5 5-1 9t0 8-2 7" stroke="#e00" stroke-width="2.500"/></symbol>
      <symbol id="d-x" viewBox="0 0 28 28"><path d="M2 2h4l8 10 8-10h4v3l-9 9 9 9v3h-4l-8-10-8 10H2v-3l9-9-9-9z" fill="#e8e8e4"/></symbol>
      <symbol id="eraser" viewBox="0 0 24 24"><path d="M3 18L13 5h9l-9 13z" fill="#f4f060"/><path d="M3 18h10v4H3zM13 22l9-12V5l-9 13z" fill="#fff"/></symbol>
      <symbol id="x-bold" viewBox="0 0 24 24"><path d="M5 4l13 17M18 4L5 21" stroke-width="3"/></symbol>
      <!-- status and taskbar -->
      <symbol id="st-list" viewBox="0 0 24 24"><path d="M2 3h20v18H2zM10 3v18" fill="#fff" stroke="#000090" stroke-width="2.500"/><path d="M4 10h4M4 14h4M4 17h4M12 10h7M12 14h7M12 17h7"/></symbol>
      <symbol id="st-box" viewBox="0 0 24 24"><path d="M2 3h20v18H2z" fill="#fff" stroke="#000090" stroke-width="2.500"/><path d="M6 5v9h16" stroke="#000090"/><path d="M7 18h13" stroke-dasharray="2 1"/></symbol>
      <symbol id="st-help" viewBox="0 0 24 24"><path d="M1 7h9l4 4v12H1z" fill="#fff"/><path d="M4 13h6M4 16h6M4 19h6"/><text x="9" y="20" class="glyph bold outline" font-size="24" fill="#f0e800">?</text></symbol>
      <symbol id="flag" viewBox="0 0 26 24"><path d="M1 5h9M1 20h9" stroke-dasharray="2 1" stroke-width="2"/><path d="M1 10h9" stroke="#e02020" stroke-dasharray="3 1" stroke-width="2.500"/><path d="M1 15h9" stroke="#2040e0" stroke-dasharray="3 1" stroke-width="2.500"/><path d="M10 4q5-4 8-2t7 0v17q-4 3-7 1t-8 2z" fill="#000" stroke="none"/><path d="M12 5q3-2 5-1v7q-3-1-5 0z" fill="#e02020" stroke="none"/><path d="M19 4h4v7h-4z" fill="#20b020" stroke="none"/><path d="M12 13q3-1 5 0v6q-3-1-5 1z" fill="#2040e0" stroke="none"/><path d="M19 13h4v5h-4z" fill="#f0e000" stroke="none"/></symbol>
      <symbol id="ie" viewBox="0 0 24 24"><path d="M20 17q-3 4-8 4-7 0-7-8t7-7q7 0 7 7H8" stroke="#2890e0" stroke-width="4"/><path d="M3 22q-4-4 7-13t13-5" stroke="#60b8f0" stroke-width="2"/></symbol>
      <symbol id="oe" viewBox="0 0 24 24"><path d="M3 6h18v13H3z" fill="#f4f8ff" stroke="#80a0d0"/><path d="M8 4l5-4 7 5-5 4v-3H8zM16 21l-5 3-8-5 5-4v3h8z" fill="#2070e0" stroke="none"/><path d="M15 9h4v4h-4z" fill="#e05050" stroke="none"/></symbol>
      <symbol id="desk" viewBox="0 0 24 24"><path d="M1 2h22v20H1z" fill="#10a0c8"/><path d="M5 5l12-1 4 4v9l-5 4H7l-2-3z" fill="#fffff0" stroke="none"/><path d="M7 9h9v9H7zM10 13l2 3 9-13"/><path d="M12 15L22 1" stroke="#e09020" stroke-width="2.500"/></symbol>
      <symbol id="msn" viewBox="0 0 24 24"><g stroke="none"><circle cx="11" cy="4" r="4" fill="#3890a8"/><circle cx="18" cy="4" r="3" fill="#50a8c8"/><path d="M0 9l10 2-2 7-5-4z" fill="#2080c0"/><ellipse cx="13" cy="15" rx="4" ry="7" fill="#e06030"/><path d="M5 15l5 2-1 7H5z" fill="#30a040"/><path d="M17 8q5 2 7 10l-6 3z" fill="#3060d0"/></g></symbol>
      <symbol id="snd" viewBox="0 0 24 24"><path d="M2 9h4l8-7v20l-8-6H2z" fill="#e8e850"/><path d="M12 4v17"/><path d="M17 9l5-4M17 12h6M17 15l5 4" stroke="#777"/></symbol>
      <symbol id="net" viewBox="0 0 24 24"><path d="M9 2h13v13H9zM2 8h12v10H2z" fill="#000" stroke="#777"/><path d="M1 21h14M17 18h6" stroke-width="3" stroke="#333"/><path d="M4 10h6" stroke="#fff"/></symbol>
      <symbol id="ball-a" viewBox="0 0 24 24"><circle cx="12" cy="12" r="12" fill="#0010d8" stroke="none"/><text x="7" y="19" class="glyph bold" font-size="20" fill="#fff">a</text></symbol>
      <symbol id="ball-i" viewBox="0 0 24 24"><circle cx="12" cy="12" r="12" fill="#0010d8" stroke="none"/><text x="9" y="20" class="serif italic" font-size="22" fill="#fff">i</text></symbol>
      <symbol id="disp" viewBox="0 0 24 24"><path d="M1 1h16l4 4v10H4z" fill="#ccc"/><path d="M4 3h5v5H4z" fill="#e020c0" stroke="none"/><path d="M9 3h6v5H9z" fill="#20e020" stroke="none"/><path d="M5 8h5v5H5z" fill="#f0e000" stroke="none"/><path d="M10 8h7v5h-7z" fill="#0020e0" stroke="none"/><path d="M7 18h14v4H7z" fill="#ddd"/></symbol>
      <symbol id="msnx" viewBox="0 0 24 24"><g stroke="none"><circle cx="14" cy="4" r="4" fill="#508890"/><path d="M1 8l8 3 2 8-6 3z" fill="#408890"/><path d="M9 9h8l2 9h-8z" fill="#507078"/><circle cx="17" cy="17" r="6" fill="#e02020"/></g><path d="M14 14l6 6M20 14l-6 6" stroke="#fff" stroke-width="2"/></symbol>
    </svg>

    <h1 class="slide-title">SETUP FOR GRAPHICS AND DISPLAY</h1>

    <main class="screen">
      <header class="titlebar">
        <svg class="icon"><use href="#cv"/></svg>
        <span class="caption">VULCAN:Envisage&nbsp; D:\CURSO - [CURSO.DG1(*)]</span>
        <div class="winbtns">
          <button class="wb" aria-label="Minimize"><svg viewBox="0 0 16 16"><path d="M3 12.500h8" stroke-width="3"/></svg></button><button class="wb" aria-label="Restore"><svg viewBox="0 0 16 16"><path d="M5 2h8v7H5zM5 3h8M2 7h8v7H2zM2 8h8" fill="#d4d0c8"/></svg></button><button class="wb close" aria-label="Close"><svg viewBox="0 0 16 16"><path d="M3 3l10 10M13 3L3 13"/></svg></button>
        </div>
      </header>

      <nav class="menubar">
        <svg class="icon"><use href="#env"/></svg>
        <a href="#">File</a><a href="#">Design</a><a href="#">View</a><a href="#">Analyse</a><a href="#">Model</a><a href="#">Grid Calc</a><a href="#">Rsvute</a><a href="#">Block</a><a href="#">Geology</a><a href="#">Tools</a><a href="#">Window</a><a href="#">Help</a>
        <div class="winbtns">
          <button class="wb" aria-label="Minimize window"><svg viewBox="0 0 16 16"><path d="M3 12.500h8" stroke-width="3"/></svg></button><button class="wb" aria-label="Restore window"><svg viewBox="0 0 16 16"><path d="M5 2h8v7H5zM5 3h8M2 7h8v7H2zM2 8h8" fill="#d4d0c8"/></svg></button><button class="wb close" aria-label="Close window"><svg viewBox="0 0 16 16"><path d="M3 3l10 10M13 3L3 13"/></svg></button>
        </div>
      </nav>

      <div class="bar">
        <div class="strip"><i class="dots"></i><i class="up"></i></div>
        <section class="band">
          <i class="grip"></i>
          <div class="group g12">
            <button class="tb" title="New"><svg class="icon"><use href="#new"/></svg></button>
            <button class="tb" title="Open"><svg class="icon"><use href="#open"/></svg></button>
            <button class="tb" title="Databases"><svg class="icon"><use href="#dblist"/></svg></button>
            <button class="tb" title="Delete layer"><svg class="icon"><use href="#layersx"/></svg></button>
            <button class="tb" title="Delete triangulation"><svg class="icon"><use href="#trix"/></svg></button>
            <button class="tb" title="Undo"><svg class="icon"><use href="#undo"/></svg></button>
            <button class="tb" title="Redo"><svg class="icon"><use href="#redo"/></svg></button>
            <button class="tb" title="Save"><svg class="icon"><use href="#save"/></svg></button>
            <button class="tb" title="Print"><svg class="icon"><use href="#print"/></svg></button>
            <button class="tb" title="New window"><svg class="icon"><use href="#winnew"/></svg></button>
            <button class="tb" title="Close window"><svg class="icon"><use href="#winx"/></svg></button>
            <button class="tb" title="Help"><svg class="icon"><use href="#help"/></svg></button>
          </div>
        </section>
        <section class="band">
          <i class="grip"></i>
          <div class="group g15">
            <button class="tb" title="Coordinates"><svg class="icon"><use href="#xyz"/></svg></button>
            <button class="tb" title="Distance"><svg class="icon"><use href="#qdist"/></svg></button>
            <button class="tb" title="Line length"><svg class="icon"><use href="#qline"/></svg></button>
            <button class="tb" title="Area"><svg class="icon"><use href="#qx2"/></svg></button>
            <button class="tb" title="Polygon area"><svg class="icon"><use href="#qbox"/></svg></button>
            <button class="tb" title="Centre"><svg class="icon"><use href="#qcirc"/></svg></button>
            <button class="tb" title="Radius"><svg class="icon"><use href="#qarc"/></svg></button>
            <button class="tb" title="Perpendicular"><svg class="icon"><use href="#qperp"/></svg></button>
            <button class="tb" title="Angle"><svg class="icon"><use href="#qang"/></svg></button>
            <button class="tb" title="Report"><svg class="icon"><use href="#qdoc2"/></svg></button>
            <button class="tb" title="Plot query"><svg class="icon"><use href="#qplot"/></svg></button>
            <button class="tb" title="Text query"><svg class="icon"><use href="#qtext"/></svg></button>
            <button class="tb" title="Legend query"><svg class="icon"><use href="#qscale"/></svg></button>
            <button class="tb" title="Document query"><svg class="icon"><use href="#qdoc"/></svg></button>
            <button class="tb" title="Primitive query"><svg class="icon"><use href="#qshape"/></svg></button>
          </div>
        </section>
      </div>

      <div class="bar">
        <div class="strip"><i class="dots"></i><i class="up"></i></div>
        <section class="band">
          <i class="grip"></i>
          <div class="fields">
            <label for="win">Window:</label>
            <span class="combo w-win"><select id="win"><option>CURSO.DG1(*)</option></select></span>
            <label for="layer" class="push">Layer:</label>
            <span class="combo w-win"><select id="layer"><option>LAYER</option></select></span>
            <label for="z">Z:</label>
            <input id="z" class="field w-z" type="text" value="2500" />
            <label for="w">W:</label>
            <input id="w" class="field w-s" type="text" value="0" />
            <label for="grad">Grad:</label>
            <input id="grad" class="field w-s" type="text" value="0:1" />
          </div>
          <button class="swatch" aria-label="Colour"><i class="green"></i></button>
          <button class="swatch white" aria-label="Fill"></button>
          <button class="swatch" aria-label="Line style"><svg class="icon wide"><use href="#line"/></svg></button>
          <div class="group g3">
            <button class="tb" title="Info"><svg class="icon"><use href="#info"/></svg></button>
            <button class="tb" title="Edit attributes"><svg class="icon"><use href="#docpen"/></svg></button>
            <button class="tb" title="Edit triangulation"><svg class="icon"><use href="#tripen"/></svg></button>
          </div>
        </section>
        <section class="band">
          <i class="grip"></i>
          <div class="group g10">
            <button class="tb" title="Render modes"><svg class="icon"><use href="#b-three"/></svg></button>
            <button class="tb" title="Load"><svg class="icon"><use href="#b-gold"/></svg></button>
            <button class="tb" title="Hide"><svg class="icon"><use href="#b-silver"/></svg></button>
            <button class="tb" title="Unload"><svg class="icon"><use href="#b-gray"/></svg></button>
            <button class="tb" title="Load all"><svg class="icon"><use href="#b-gold2"/></svg></button>
            <button class="tb" title="Hide all"><svg class="icon"><use href="#b-silver2"/></svg></button>
            <button class="tb" title="Unload all"><svg class="icon"><use href="#b-gray2"/></svg></button>
            <button class="tb" title="Load image"><svg class="icon"><use href="#p-gold"/></svg></button>
            <button class="tb" title="Hide image"><svg class="icon"><use href="#p-silver"/></svg></button>
            <button class="tb" title="Unload image"><svg class="icon"><use href="#p-gray"/></svg></button>
          </div>
        </section>
      </div>

      <div class="main">
        <aside class="explorer">
          <div class="hstrip"><i class="dots"></i><i class="left"></i></div>
          <div class="dock-head">
            <i class="hgrip"></i>
            <button class="mini" aria-label="Collapse"><i class="tri-up"></i></button>
            <button class="mini" aria-label="Close panel"><svg viewBox="0 0 16 16"><path d="M4 4l8 8M12 4l-8 8" stroke-width="3"/></svg></button>
          </div>
          <div class="panel">
            <div class="panel-title"><svg class="icon"><use href="#f-find"/></svg>Windows Explorer</div>
            <div class="panel-list">
              <div class="tree files">
                <div class="row"><svg class="icon"><use href="#folder"/></svg><span>D:\CURSO</span></div>
                <div class="row"><i class="cell v h"><b>+</b></i><svg class="icon"><use href="#f-block"/></svg><span>Block Models</span></div>
                <div class="row"><i class="cell v h"><b>−</b></i><svg class="icon"><use href="#f-layers"/></svg><span>Design Databases</span></div>
                <div class="row"><i class="cell v"></i><i class="cell h"><b>−</b></i><svg class="icon"><use href="#lock"/></svg><span class="locked">chqcurso.dgd</span></div>
                <div class="row"><i class="cell v"></i><i class="cell"></i><i class="cell end h"></i><svg class="icon"><use href="#layers"/></svg><span class="selected bold">LAYER</span></div>
                <div class="row"><i class="cell v h"><b>+</b></i><svg class="icon"><use href="#f-grid"/></svg><span>Gdcalc</span></div>
                <div class="row"><i class="cell v h"><b>+</b></i><svg class="icon"><use href="#f-grid"/></svg><span>Grids</span></div>
                <div class="row"><i class="cell v h"><b>+</b></i><svg class="icon"><use href="#f-image"/></svg><span>Images</span></div>
                <div class="row"><i class="cell v h"><b>+</b></i><svg class="icon"><use href="#folder"/></svg><span>Import/Export</span></div>
                <div class="row"><i class="cell v h"><b>+</b></i><svg class="icon"><use href="#f-script"/></svg><span>Lava Scripts</span></div>
                <div class="row"><i class="cell v h"><b>+</b></i><svg class="icon"><use href="#folder"/></svg><span>Other</span></div>
                <div class="row"><i class="cell v h"><b>+</b></i><svg class="icon"><use href="#f-plot"/></svg><span>Plots</span></div>
                <div class="row"><i class="cell v h"><b>+</b></i><svg class="icon"><use href="#f-spec"/></svg><span>Specifications</span></div>
                <div class="row"><i class="cell v h"><b>+</b></i><svg class="icon"><use href="#f-tri"/></svg><span>Triangulations</span></div>
                <div class="row"><i class="cell end h"><b>+</b></i><svg class="icon"><use href="#f-user"/></svg><span>User Databases</span></div>
              </div>
            </div>
          </div>
          <div class="dock-tabs">
            <button class="dtab on"><svg class="icon"><use href="#folder"/></svg>Data</button>
            <button class="dtab"><svg class="icon"><use href="#f-res"/></svg>Resou...</button>
            <button class="dtab"><svg class="icon"><use href="#f-spec"/></svg>Envisa...</button>
          </div>
        </aside>

        <aside class="tools">
          <div class="hstrip"><i class="dots"></i><i class="left"></i></div>
          <section class="toolset">
            <i class="hgrip"></i>
            <div class="tgrid">
              <button class="tb" title="Create layer"><svg class="icon"><use href="#layernew"/></svg></button>
              <button class="tb" title="Point"><svg class="icon"><use href="#dot"/></svg></button>
              <button class="tb" title="Line"><svg class="icon"><use href="#seg"/></svg></button>
              <button class="tb" title="Polygon"><svg class="icon"><use href="#poly"/></svg></button>
              <button class="tb" title="Image"><svg class="icon"><use href="#image"/></svg></button>
              <button class="tb" title="Curve"><svg class="icon"><use href="#curve"/></svg></button>
              <button class="tb" title="Arc"><svg class="icon"><use href="#arc"/></svg></button>
              <button class="tb" title="Point grid"><svg class="icon"><use href="#dots9"/></svg></button>
              <button class="tb" title="Arrow"><svg class="icon"><use href="#bigarrow"/></svg></button>
              <button class="tb" title="Solid arrow"><svg class="icon"><use href="#bluearrow"/></svg></button>
              <button class="tb" title="Text"><svg class="icon"><use href="#bigA"/></svg></button>
              <button class="tb" title="Text 3D"><svg class="icon"><use href="#a3d"/></svg></button>
              <button class="tb" title="Picture"><svg class="icon"><use href="#picpage"/></svg></button>
              <button class="tb" title="Spline"><svg class="icon"><use href="#loop"/></svg></button>
            </div>
          </section>
          <section class="toolset">
            <i class="hgrip"></i>
            <div class="tgrid">
              <button class="tb" title="Delete"><svg class="icon"><use href="#del"/></svg></button>
              <button class="tb" title="Move"><svg class="icon"><use href="#movec"/></svg></button>
              <button class="tb" title="Move point"><svg class="icon"><use href="#ptmovec"/></svg></button>
              <button class="tb" title="Join"><svg class="icon"><use href="#open4c"/></svg></button>
              <button class="tb" title="Direction"><svg class="icon"><use href="#seg12"/></svg></button>
              <button class="tb" title="Trim"><svg class="icon"><use href="#trim"/></svg></button>
              <button class="tb" title="Split"><svg class="icon"><use href="#split"/></svg></button>
              <button class="tb" title="Mirror"><svg class="icon"><use href="#mirror"/></svg></button>
              <button class="tb" title="Copy"><svg class="icon"><use href="#copies"/></svg></button>
              <button class="tb" title="Fillet"><svg class="icon"><use href="#fillet"/></svg></button>
              <button class="tb" title="Extents"><svg class="icon"><use href="#fit"/></svg></button>
              <button class="tb" title="Scale"><svg class="icon"><use href="#scale2"/></svg></button>
              <button class="tb" title="Explode"><svg class="icon"><use href="#bomb"/></svg></button>
            </div>
          </section>
          <section class="toolset">
            <i class="hgrip"></i>
            <div class="tgrid">
              <button class="tb" title="Move object"><svg class="icon"><use href="#move"/></svg></button>
              <button class="tb" title="Move to point"><svg class="icon"><use href="#mvdot"/></svg></button>
              <button class="tb" title="Move to intersection"><svg class="icon"><use href="#mvx"/></svg></button>
              <button class="tb" title="Move to grid"><svg class="icon"><use href="#mvgrid"/></svg></button>
              <button class="tb" title="Drag"><svg class="icon"><use href="#mvhand"/></svg></button>
              <button class="tb" title="Register to surface"><svg class="icon"><use href="#mvsurf"/></svg></button>
              <button class="tb" title="Move distance"><svg class="icon"><use href="#mvrule"/></svg></button>
              <button class="tb" title="Drop point"><svg class="icon"><use href="#mvdown"/></svg></button>
              <button class="tb" title="Drop line"><svg class="icon"><use href="#mvdown2"/></svg></button>
              <button class="tb" title="Move Z"><svg class="icon"><use href="#mvz"/></svg></button>
              <button class="tb" title="Grade"><svg class="icon"><use href="#mvtri"/></svg></button>
              <button class="tb" title="Rotate"><svg class="icon"><use href="#rotate"/></svg></button>
              <button class="tb" title="Scale object"><svg class="icon"><use href="#mvscale"/></svg></button>
            </div>
          </section>
          <section class="toolset">
            <i class="hgrip"></i>
            <div class="tgrid">
              <button class="tb" title="Database list"><svg class="icon"><use href="#l-db"/></svg></button>
              <button class="tb" title="Layer list"><svg class="icon"><use href="#l-layer"/></svg></button>
              <button class="tb" title="Triangulation list"><svg class="icon"><use href="#l-tri"/></svg></button>
              <button class="tb" title="Block list"><svg class="icon"><use href="#l-block"/></svg></button>
              <button class="tb" title="Grid list"><svg class="icon"><use href="#l-grid"/></svg></button>
            </div>
          </section>
          <section class="toolset">
            <i class="hgrip"></i>
            <div class="tgrid">
              <button class="tb" title="Snap to point"><svg class="icon"><use href="#ptmove"/></svg></button>
              <button class="tb" title="Snap offset"><svg class="icon"><use href="#s-off"/></svg></button>
              <button class="tb" title="Snap to triangle"><svg class="icon"><use href="#s-tri"/></svg></button>
              <button class="tb" title="Snap to intersection"><svg class="icon"><use href="#s-cross"/></svg></button>
              <button class="tb" title="Snap distance"><svg class="icon"><use href="#s-rule"/></svg></button>
              <button class="tb" title="Snap along line"><svg class="icon"><use href="#s-seg"/></svg></button>
              <button class="tb" title="Snap to curve"><svg class="icon"><use href="#s-curve"/></svg></button>
              <button class="tb" title="Snap to vertex"><svg class="icon"><use href="#s-v"/></svg></button>
              <button class="tb" title="Snap to mesh"><svg class="icon"><use href="#s-mesh"/></svg></button>
              <button class="tb" title="Snap to centroid"><svg class="icon"><use href="#s-tri2"/></svg></button>
            </div>
          </section>
          <section class="toolset">
            <i class="hgrip"></i>
            <div class="tgrid">
              <button class="tb" title="Open polygon"><svg class="icon"><use href="#open4"/></svg></button>
              <button class="tb" title="Insert"><svg class="icon"><use href="#c-arr"/></svg></button>
              <button class="tb" title="Group"><svg class="icon"><use href="#c-boxes"/></svg></button>
              <button class="tb" title="Connect points"><svg class="icon"><use href="#c-pts"/></svg></button>
              <button class="tb" title="Solid boolean"><svg class="icon"><use href="#c-blk"/></svg></button>
              <button class="tb" title="Box boolean"><svg class="icon"><use href="#c-box"/></svg></button>
              <button class="tb" title="Shapes"><svg class="icon"><use href="#c-shapes"/></svg></button>
              <button class="tb" title="Clip"><svg class="icon"><use href="#c-rect"/></svg></button>
              <button class="tb" title="Crop"><svg class="icon"><use href="#c-hash"/></svg></button>
              <button class="tb" title="Merge lines"><svg class="icon"><use href="#c-hatch"/></svg></button>
              <button class="tb" title="Combine symbols"><svg class="icon"><use href="#c-sym"/></svg></button>
              <button class="tb" title="Measure"><svg class="icon"><use href="#c-meas"/></svg></button>
            </div>
          </section>
        </aside>

        <div class="work">
          <div class="upper">
            <div class="canvas">
              <div class="dialog" role="dialog" aria-label="Preferences">
                <div class="dialog-title">
                  <span>Preferences</span>
                  <button class="wb" aria-label="Close dialog"><svg viewBox="0 0 16 16"><path d="M3 3l10 10M13 3L3 13"/></svg></button>
                </div>
                <div class="dialog-body">
                  <div class="prefs-list">
                    <div class="tree prefs">
                      <div class="row"><i class="cell first h"></i><span>Appearance</span></div>
                      <div class="row"><i class="cell v h"></i><span class="selected">Dialogs and Popups</span></div>
                      <div class="row"><i class="cell v h"><b>−</b></i><span>Graphics</span></div>
                      <div class="row"><i class="cell v"></i><i class="cell v h"></i><span>Input</span></div>
                      <div class="row"><i class="cell v"></i><i class="cell v h"></i><span>Colours</span></div>
                      <div class="row"><i class="cell v"></i><i class="cell v h"></i><span>Effects</span></div>
                      <div class="row"><i class="cell v"></i><i class="cell end h"></i><span>Video Capture</span></div>
                      <div class="row"><i class="cell v h"><b>−</b></i><span>File Types</span></div>
                      <div class="row"><i class="cell v"></i><i class="cell v h"></i><span>Triangulations</span></div>
                      <div class="row"><i class="cell v"></i><i class="cell end h"></i><span>Grids</span></div>
                      <div class="row"><i class="cell v h"></i><span>Miscellaneous</span></div>
                      <div class="row"><i class="cell v h"></i><span>Plot All</span></div>
                      <div class="row"><i class="cell end h"><b>−</b></i><span>Applications</span></div>
                      <div class="row"><i class="cell"></i><i class="cell v h"></i><span>Plotting Utility</span></div>
                      <div class="row"><i class="cell"></i><i class="cell end h"></i><span>Vulcan Explorer</span></div>
                    </div>
                  </div>
                  <fieldset class="box outer">
                    <legend>Dialogs and Popups</legend>
                    <fieldset class="box">
                      <legend>Dialogs</legend>
                      <div class="line"><label for="panelpos">Panel position</label><span class="combo w-pos"><select id="panelpos"><option>Centre of screen</option></select></span></div>
                      <label class="check"><input type="checkbox" checked />Right mouse click is cancel</label>
                    </fieldset>
                    <fieldset class="box">
                      <legend>Popups</legend>
                      <div class="line"><label for="popuppos">Popup position</label><span class="combo w-pos"><select id="popuppos"><option>Under cursor</option></select></span></div>
                      <label class="check"><input type="checkbox" checked />Right mouse click is cancel</label>
                      <label class="check"><input type="checkbox" />Disable confirms</label>
                    </fieldset>
                    <fieldset class="box roomy">
                      <legend>Grid Controls</legend>
                      <label class="check"><input type="checkbox" />Prompt before forwarding grid cell values</label>
                    </fieldset>
                    <fieldset class="box">
                      <legend><label class="check"><input type="checkbox" />Save Panels as Bitmaps</label></legend>
                      <div class="line off"><label for="savein">Save in</label><span class="combo grow"><select id="savein" disabled><option></option></select></span><button class="push-btn small" disabled>Browse ...</button></div>
                    </fieldset>
                    <fieldset class="box roomy">
                      <legend>Right Click History</legend>
                      <label class="check"><input type="checkbox" checked />Right mouse click displays history list items</label>
                    </fieldset>
                  </fieldset>
                </div>
                <div class="dialog-foot">
                  <button class="tb" title="Dialog help"><svg class="icon"><use href="#help"/></svg></button>
                  <button class="push-btn default">OK</button>
                  <button class="push-btn">Cancel</button>
                </div>
              </div>
            </div>
            <aside class="rail">
              <div class="hstrip"><i class="right"></i><i class="dots"></i></div>
              <i class="hgrip"></i>
              <div class="rail-list">
                <button class="tb" title="Zoom"><svg class="icon"><use href="#v-zoom"/></svg></button>
                <button class="tb" title="Pan"><svg class="icon"><use href="#v-pan"/></svg></button>
                <button class="tb" title="Axis"><svg class="icon"><use href="#v-axis"/></svg></button>
                <button class="tb" title="Rotate view"><svg class="icon"><use href="#v-rot"/></svg></button>
                <button class="tb" title="View direction"><svg class="icon"><use href="#v-eye"/></svg></button>
                <hr>
                <button class="tb" title="Refresh"><svg class="icon"><use href="#v-r"/></svg></button>
                <button class="tb" title="Globe"><svg class="icon"><use href="#v-globe"/></svg></button>
                <button class="tb" title="Viewport"><svg class="icon"><use href="#v-win"/></svg></button>
                <button class="tb" title="Clean viewport"><svg class="icon"><use href="#v-winbrush"/></svg></button>
                <button class="tb" title="Wizard"><svg class="icon"><use href="#v-wand"/></svg></button>
                <hr>
                <button class="tb pressed" title="Background"><svg class="icon"><use href="#v-img"/></svg></button>
                <button class="tb pressed" title="Solid view"><svg class="icon"><use href="#v-cube"/></svg></button>
                <button class="tb pressed" title="Overlay"><svg class="icon"><use href="#v-over"/></svg></button>
                <button class="tb" title="Wireframe"><svg class="icon"><use href="#v-wire"/></svg></button>
                <button class="tb" title="Windows"><svg class="icon"><use href="#v-stack"/></svg></button>
                <button class="tb" title="Grid"><svg class="icon"><use href="#v-grid"/></svg></button>
                <button class="tb" title="Target"><svg class="icon"><use href="#v-target"/></svg></button>
              </div>
            </aside>
          </div>

          <div class="bar low">
            <div class="strip"><i class="down"></i><i class="dots"></i></div>
            <section class="band">
              <i class="grip"></i>
              <div class="group g4">
                <button class="tb pressed" title="Indicate"><svg class="icon"><use href="#d-arrow"/></svg></button>
                <button class="tb" title="Snap object"><svg class="icon"><use href="#d-sq"/></svg></button>
                <button class="tb" title="Snap target"><svg class="icon"><use href="#d-circ"/></svg></button>
                <button class="tb" title="Snap grid"><svg class="icon"><use href="#d-grid"/></svg></button>
              </div>
              <i class="vline"></i>
              <div class="group g4">
                <button class="tb" title="Keyboard"><svg class="icon"><use href="#d-keys"/></svg></button>
                <button class="tb" title="Compass"><svg class="icon"><use href="#d-comp"/></svg></button>
                <button class="tb" title="Angle input"><svg class="icon"><use href="#d-ang"/></svg></button>
                <button class="tb" title="Stream"><svg class="icon"><use href="#d-wave"/></svg></button>
              </div>
              <i class="vline"></i>
              <div class="fields tight">
                <label for="zoom">Zoom:</label>
                <input id="zoom" class="field w-zoom" type="text" value="0.8" />
              </div>
              <button class="tb xl" title="Cancel zoom"><svg class="icon"><use href="#d-x"/></svg></button>
            </section>
            <section class="band">
              <i class="grip"></i>
              <div class="group g5">
                <button class="tb" title="Gold"><svg class="icon"><use href="#b-gold"/></svg></button>
                <button class="tb" title="Silver"><svg class="icon"><use href="#b-silver"/></svg></button>
                <button class="tb" title="Gray"><svg class="icon"><use href="#b-gray"/></svg></button>
                <button class="tb" title="Red"><svg class="icon"><use href="#b-red"/></svg></button>
                <button class="tb" title="Mixed"><svg class="icon"><use href="#b-mix"/></svg></button>
              </div>
            </section>
          </div>

          <div class="output">
            <div class="strip"><i class="down"></i><i class="dots"></i></div>
            <div class="out-side">
              <button class="mini" aria-label="Close output"><svg viewBox="0 0 16 16"><path d="M4 4l8 8M12 4l-8 8" stroke-width="3"/></svg></button>
              <button class="mini" aria-label="Shrink output"><i class="tri-left"></i></button>
              <i class="grip"></i>
            </div>
            <div class="out-panel">
              <div class="out-top">
                <div class="out-icons">
                  <svg class="icon"><use href="#x-bold"/></svg>
                  <svg class="icon"><use href="#print"/></svg>
                  <svg class="icon"><use href="#save"/></svg>
                  <svg class="icon"><use href="#eraser"/></svg>
                </div>
                <pre class="log">Object    : LINE_11    (LINE digitising 14-Jun-2005 08:44:35    )
Value     : 2500.000
Group     : Not defined
Primitive : Not defined
Feature   : Not defined</pre>
                <div class="vscroll">
                  <button class="sb" aria-label="Scroll up"><i class="tri-up black"></i></button>
                  <i class="track"></i>
                  <i class="thumb"></i>
                  <button class="sb" aria-label="Scroll down"><i class="tri-down black"></i></button>
                </div>
              </div>
              <div class="out-tabs">
                <button class="sb" aria-label="Previous tab"><i class="tri-left"></i></button>
                <button class="sb" aria-label="Next tab"><i class="tri-right"></i></button>
                <button class="sheet"><span>Workbench</span></button>
                <button class="sheet"><span>Envisage Console</span></button>
                <button class="sheet on"><span>Envisage</span></button>
                <div class="hscroll">
                  <i class="splitter"></i>
                  <button class="sb" aria-label="Scroll left"><i class="tri-left"></i></button>
                  <i class="track"></i>
                  <button class="sb" aria-label="Scroll right"><i class="tri-right"></i></button>
                </div>
              </div>
            </div>
          </div>
        </div>
      </div>

      <footer class="status">
        <div class="scell s1">Select menu option</div>
        <div class="scell s2">76721.21 , 4459.73, 2500.00</div>
        <div class="scell s2"></div>
        <div class="scell s3">chqcurso.dgd</div>
        <button class="stb on" aria-label="Envisage"><svg class="icon"><use href="#env"/></svg></button>
        <button class="stb on" aria-label="Explorer"><svg class="icon"><use href="#st-list"/></svg></button>
        <button class="stb on" aria-label="Output"><svg class="icon"><use href="#st-box"/></svg></button>
        <button class="stb" aria-label="Help topics"><svg class="icon"><use href="#st-help"/></svg></button>
        <button class="start"><svg class="icon"><use href="#cv"/></svg>Start</button>
      </footer>

      <div class="taskbar">
        <button class="inicio"><svg class="icon"><use href="#flag"/></svg>Inicio</button>
        <i class="vline"></i><i class="nub"></i>
        <div class="quick">
          <svg class="icon"><use href="#ie"/></svg>
          <svg class="icon"><use href="#oe"/></svg>
          <svg class="icon"><use href="#desk"/></svg>
          <svg class="icon"><use href="#msn"/></svg>
        </div>
        <i class="vline"></i><i class="nub"></i>
        <button class="task"><svg class="icon"><use href="#cv"/></svg>VULCAN:Envisage&nbsp; D:\C...</button>
        <div class="tray">
          <svg class="icon"><use href="#snd"/></svg>
          <svg class="icon"><use href="#net"/></svg>
          <span class="lang">ES</span>
          <svg class="icon"><use href="#ball-a"/></svg>
          <svg class="icon"><use href="#ball-i"/></svg>
          <svg class="icon"><use href="#disp"/></svg>
          <svg class="icon"><use href="#msnx"/></svg>
          <time>8:54</time>
        </div>
      </div>
    </main>
  </body>
</html>
```

FILE: styles.css
```css
* {
  box-sizing: border-box;
}
body {
  margin: 0;
  min-height: 100vh;
  padding: 46px 149px 114px 150px;
  display: flex;
  flex-direction: column;
  background: #000;
  color: #000;
  font: 16px/20px "Liberation Sans", Arial, sans-serif;
}
button,
input,
select {
  font: inherit;
  color: inherit;
  margin: 0;
  padding: 0;
  border-radius: 0;
}
button {
  border: none;
  background: #d4d0c8;
}
i {
  font-style: normal;
}
.paints {
  position: absolute;
}
.sprite {
  display: none;
}
.slide-title {
  margin: 0 0 1px;
  color: #fff;
  font-size: 57px;
  font-weight: normal;
  line-height: 64px;
  text-align: center;
}
.screen {
  flex: 1;
  display: flex;
  flex-direction: column;
  background: #d4d0c8;
  min-width: 0;
}

/* icons */
.icon {
  width: 24px;
  height: 24px;
  flex: none;
  fill: none;
  stroke: #000;
  stroke-width: 1.5;
}
.icon.wide {
  width: 40px;
}
.glyph {
  font-family: "Liberation Sans", Arial, sans-serif;
  stroke: none;
}
.serif {
  font-family: "Liberation Serif", "Times New Roman", serif;
  font-weight: bold;
  stroke: none;
}
.glyph:not([fill]),
.serif:not([fill]) {
  fill: #000;
}
.bold {
  font-weight: bold;
}
.italic {
  font-style: italic;
}
.outline {
  stroke: #000;
  stroke-width: 1;
}

/* title and menu */
.titlebar {
  display: flex;
  align-items: center;
  height: 27px;
  padding: 0 3px;
  background: linear-gradient(90deg, #808080, #c0c0c0);
}
.caption {
  flex: 1;
  padding-left: 3px;
  color: #d4d0c8;
  font: bold 17px/22px "Noto Sans", sans-serif;
}
.winbtns {
  display: flex;
  margin-left: auto;
}
.wb {
  display: flex;
  align-items: center;
  justify-content: center;
  width: 24px;
  height: 21px;
  border: 1px solid;
  border-color: #fff #404040 #404040 #fff;
  box-shadow: inset -1px -1px #808080;
}
.wb svg,
.mini svg {
  width: 16px;
  height: 16px;
  fill: none;
  stroke: #000;
  stroke-width: 2;
}
.winbtns .close {
  margin-left: 3px;
}
.menubar {
  display: flex;
  align-items: center;
  height: 31px;
  padding: 0 3px 0 6px;
  border-bottom: 1px solid #808080;
  font: 15px/22px "Noto Sans", sans-serif;
}
.menubar a {
  margin-right: 19px;
  color: #808080;
  text-decoration: none;
}
.menubar .icon {
  margin-right: 8px;
}

/* toolbars */
.bar {
  display: flex;
  height: 41px;
  border-top: 1px solid #fff;
  border-bottom: 1px solid #808080;
}
.strip {
  display: flex;
  flex-direction: column;
  align-items: center;
  gap: 2px;
  width: 15px;
  padding: 3px 2px;
  border-right: 1px solid #808080;
}
.strip .dots {
  flex: 1;
  width: 8px;
}
.dots {
  background: conic-gradient(at 2px 2px, transparent 75%, #3c3c3c 0) 0 0/4px 4px;
}
.up,
.down,
.left,
.right {
  flex: none;
  border: 5px solid transparent;
}
.up {
  border-top: 0;
  border-bottom-color: #000080;
}
.down {
  border-bottom: 0;
  border-top-color: #000080;
}
.left {
  border-left: 0;
  border-right-color: #000080;
}
.right {
  border-right: 0;
  border-left-color: #000080;
}
.band {
  display: flex;
  align-items: center;
  padding-left: 2px;
  border-left: 1px solid #fff;
  border-right: 1px solid #808080;
}
.grip {
  flex: none;
  width: 12px;
  height: 36px;
  background: linear-gradient(90deg, #fff 2px, #d4d0c8 2px 4px, #808080 4px 5px, transparent 5px) 0 0/6px 100%;
}
.hgrip {
  display: block;
  height: 12px;
  background: linear-gradient(#fff 2px, #d4d0c8 2px 4px, #808080 4px 5px, transparent 5px) 0 0/100% 6px;
}
.group {
  display: flex;
}
.tb {
  flex: 1;
  display: flex;
  align-items: center;
  justify-content: center;
  background: none;
}
.g3 {
  width: 112px;
}
.g4 {
  width: 146px;
}
.g5 {
  width: 182px;
}
.g10 {
  width: 366px;
}
.g12 {
  width: 442px;
  padding: 0 3px;
}
.g15 {
  width: 550px;
  padding-left: 1px;
}
.group .tb {
  height: 32px;
}
.pressed {
  border: 2px solid;
  border-color: #606060 #fff #fff #606060;
  background: #e4e2dc;
}
.fields {
  display: flex;
  align-items: center;
  gap: 9px;
  padding-left: 4px;
}
.fields .push {
  margin-left: 3px;
}
.field,
.combo {
  border: 2px solid;
  border-color: #606060 #fff #fff #606060;
  background: #fff;
}
.field {
  height: 32px;
  padding: 0 3px 4px;
  outline: none;
}
.combo {
  position: relative;
  display: flex;
  height: 31px;
}
.combo select {
  flex: 1;
  width: 100%;
  padding: 0 4px;
  border: none;
  outline: none;
  appearance: none;
  background: none;
}
.combo::before {
  content: "";
  position: absolute;
  top: 0;
  right: 0;
  bottom: 0;
  width: 24px;
  border: 1px solid;
  border-color: #fff #404040 #404040 #fff;
  box-shadow: inset -1px -1px #808080;
  background: #d4d0c8;
  pointer-events: none;
}
.combo::after {
  content: "";
  position: absolute;
  top: 11px;
  right: 6px;
  border: 6px solid transparent;
  border-top: 6px solid #000;
  border-bottom: 0;
  pointer-events: none;
}
.w-win {
  width: 204px;
}
.w-z {
  width: 97px;
}
.w-s {
  width: 72px;
}
.w-zoom {
  width: 60px;
}
.w-pos {
  width: 199px;
}
.swatch {
  display: flex;
  align-items: center;
  justify-content: center;
  width: 48px;
  height: 32px;
  margin-right: 1px;
  border: 2px solid;
  border-color: #fff #606060 #606060 #fff;
}
.fields + .swatch {
  width: 45px;
  margin-left: 11px;
}
.swatch.white {
  background: #fff;
}
.green {
  width: 37px;
  height: 24px;
  background: #0f0;
  border: 1px solid;
  border-color: #0f0 #000 #000 #0f0;
}

/* main split */
.main {
  flex: 1;
  display: flex;
  min-height: 0;
  border-top: 2px solid #fff;
}
.explorer {
  display: flex;
  flex-direction: column;
  width: 310px;
  border-right: 1px solid #808080;
}
.hstrip {
  display: flex;
  align-items: center;
  gap: 2px;
  height: 14px;
  padding: 0 2px;
  border-bottom: 1px solid #808080;
}
.hstrip .dots {
  flex: 1;
  height: 10px;
}
.dock-head {
  display: flex;
  align-items: center;
  gap: 3px;
  padding: 5px 2px 8px 5px;
}
.dock-head .hgrip {
  flex: 1;
}
.mini {
  display: flex;
  align-items: center;
  justify-content: center;
  width: 19px;
  height: 19px;
  border: 1px solid;
  border-color: #fff #404040 #404040 #fff;
  box-shadow: inset -1px -1px #808080;
}
.panel {
  flex: 1;
  display: flex;
  flex-direction: column;
  margin: 0 5px 0 6px;
  padding: 0 9px 9px;
  border: 2px solid;
  border-color: #fff #808080 #808080 #fff;
}
.panel-title {
  display: flex;
  align-items: center;
  gap: 8px;
  height: 43px;
  padding-left: 8px;
}
.panel-list {
  flex: 1;
  background: #fff;
}
.tree {
  display: grid;
  grid-auto-rows: 1fr;
}
.tree.files {
  height: 365px;
}
.tree.prefs {
  height: 363px;
}
.row {
  display: flex;
  align-items: center;
}
.row span {
  padding: 2px 3px;
}
.row .icon + span {
  margin-left: 5px;
}
.row .locked {
  color: #f00000;
  font-weight: bold;
  font-size: 17px;
}
.row .selected {
  background: #0a246a;
  color: #fff;
}
.row .icon + .selected {
  margin-left: 4px;
  padding: 2px 5px;
}
.cell {
  --vert: repeating-linear-gradient(#888 0 1px, transparent 1px 3px);
  --horz: repeating-linear-gradient(90deg, #888 0 1px, transparent 1px 3px);
  display: flex;
  align-items: center;
  justify-content: center;
  align-self: stretch;
  width: 29px;
  background-repeat: no-repeat;
}
.cell.v {
  background-image: var(--vert);
  background-size: 1px 100%;
  background-position: 14px 0;
}
.cell.h {
  background-image: var(--horz);
  background-size: 15px 1px;
  background-position: 14px 12px;
}
.cell.v.h,
.cell.end.h,
.cell.first.h {
  background-image: var(--vert), var(--horz);
  background-size: 1px 100%, 15px 1px;
  background-position: 14px 0, 14px 12px;
}
.cell.end.h {
  background-size: 1px 12px, 15px 1px;
}
.cell.first.h {
  background-size: 1px 12px, 15px 1px;
  background-position: 14px 12px, 14px 12px;
}
.cell b {
  width: 13px;
  height: 13px;
  border: 1px solid #808080;
  background: #fff;
  line-height: 11px;
  text-align: center;
}
.dock-tabs {
  display: flex;
  gap: 2px;
  height: 41px;
  padding: 0 0 5px 19px;
}
.dtab {
  display: flex;
  align-items: center;
  justify-content: center;
  gap: 3px;
  width: 100px;
  border: 2px solid;
  border-color: #d4d0c8 #303030 #303030 #fff;
  border-radius: 0 0 4px 4px;
}
.dtab.on {
  width: 73px;
}

/* tool palette */
.tools {
  width: 189px;
  padding-right: 1px;
  border-right: 1px solid #808080;
}
.toolset {
  padding: 2px 2px 2px;
  border-top: 1px solid #fff;
  border-bottom: 1px solid #808080;
  border-right: 1px solid #808080;
}
.tgrid {
  display: grid;
  grid-template-columns: repeat(5, 1fr);
  grid-auto-rows: 36px;
  padding-top: 3px;
}

/* drawing area */
.work {
  flex: 1;
  display: flex;
  flex-direction: column;
  min-width: 0;
}
.upper {
  flex: 1;
  display: flex;
}
.canvas {
  flex: 1;
  display: flex;
  padding: 29px 17px 49px 1px;
  background: #000;
  border: 2px solid;
  border-color: #606060 #fff #fff #606060;
}
.rail {
  width: 45px;
  padding: 0 2px 0 3px;
}
.rail-list {
  display: grid;
  grid-template-rows: repeat(5, 1fr) 5px repeat(5, 1fr) 5px repeat(7, 1fr);
  height: 634px;
  border-right: 1px solid #808080;
  border-bottom: 1px solid #808080;
}
.rail .hgrip {
  margin: 3px 2px;
}
.rail hr {
  width: 36px;
  margin: 1px 0 2px 3px;
  border: none;
  border-top: 1px solid #808080;
  border-bottom: 1px solid #fff;
}
.rail .pressed {
  margin: 1px 3px 2px;
}

/* preferences dialog */
.dialog {
  flex: 1;
  display: flex;
  flex-direction: column;
  padding: 2px;
  background: #d4d0c8;
  border: 2px solid;
  border-color: #e8e6e0 #606060 #606060 #e8e6e0;
}
.dialog-title {
  display: flex;
  align-items: center;
  justify-content: space-between;
  height: 28px;
  padding: 0 4px 0 2px;
  background: linear-gradient(90deg, #0a246a, #a6caf0);
  color: #fff;
  font: bold 17px/22px "Noto Sans", sans-serif;
}
.dialog-body {
  flex: 1;
  display: flex;
  gap: 17px;
  padding: 16px 17px 0 16px;
}
.prefs-list {
  width: 302px;
  padding-top: 2px;
  background: #fff;
  border: 2px solid;
  border-color: #606060 #fff #fff #606060;
}
.box {
  min-width: 0;
  margin: 0 0 1px;
  padding: 9px 20px 21px;
  border: 1px solid #808080;
  box-shadow: 1px 1px #fff, inset 1px 1px #fff;
}
.box legend {
  height: 22px;
  margin-left: -10px;
  padding: 0 3px;
  background: #d4d0c8;
  line-height: 22px;
}
.box.outer {
  flex: 1;
  margin: 0;
  padding: 10px 21px 0 22px;
}
.box.outer > legend {
  margin-left: -12px;
}
.box.roomy {
  padding: 13px 20px 23px;
}
.line {
  display: flex;
  align-items: center;
  gap: 8px;
}
.check {
  display: flex;
  align-items: center;
  gap: 9px;
  height: 30px;
}
.roomy .check {
  height: 24px;
}
legend .check {
  height: 22px;
}
.check input {
  appearance: none;
  display: flex;
  align-items: center;
  justify-content: center;
  width: 19px;
  height: 19px;
  background: #fff;
  border: 2px solid;
  border-color: #606060 #f4f2ee #f4f2ee #606060;
}
.check input:checked::before {
  content: "";
  width: 11px;
  height: 6px;
  margin-top: -4px;
  border-left: 3px solid #000;
  border-bottom: 3px solid #000;
  transform: rotate(-45deg);
}
.off {
  color: #808080;
  text-shadow: 1px 1px #fff;
}
.off .combo {
  background: #d4d0c8;
}
.off .combo::after {
  border-top-color: #808080;
}
.grow {
  flex: 1;
}
.push-btn {
  width: 114px;
  height: 35px;
  border: 2px solid;
  border-color: #fff #606060 #606060 #fff;
}
.push-btn.small {
  width: 87px;
  height: 31px;
  color: #808080;
  text-shadow: 1px 1px #fff;
}
.push-btn.default {
  outline: 2px solid #000;
  outline-offset: -2px;
  border-width: 3px;
}
.dialog-foot {
  display: flex;
  align-items: center;
  gap: 9px;
  height: 58px;
  padding: 8px 7px 0 12px;
}
.dialog-foot .tb {
  flex: none;
  margin-right: auto;
}

/* digitise bar */
.bar.low {
  height: 45px;
  padding-bottom: 3px;
}
.bar.low .strip {
  width: 16px;
}
.vline {
  flex: none;
  width: 2px;
  height: 32px;
  margin: 0 2px;
  border-left: 1px solid #808080;
  border-right: 1px solid #fff;
}
.tight {
  padding-left: 1px;
  gap: 7px;
}
.tb.xl {
  flex: none;
  width: 46px;
  margin-left: 4px;
}
.tb.xl .icon {
  width: 28px;
  height: 28px;
}

/* output window */
.output {
  display: flex;
  height: 154px;
  padding: 1px 4px 3px 0;
  border-top: 1px solid #fff;
}
.output .strip {
  width: 16px;
}
.out-side {
  display: flex;
  flex-direction: column;
  align-items: center;
  gap: 4px;
  width: 28px;
  padding-top: 3px;
}
.out-side .grip {
  flex: 1;
}
.out-panel {
  flex: 1;
  display: flex;
  flex-direction: column;
  min-width: 0;
  margin: 3px 0 5px;
  border: 2px solid;
  border-color: #808080 #fff #fff #808080;
}
.out-top {
  flex: 1;
  display: flex;
  min-height: 0;
}
.out-icons {
  display: flex;
  flex-direction: column;
  align-items: center;
  gap: 5px;
  width: 37px;
  overflow: hidden;
  padding-top: 3px;
}
.log {
  flex: 1;
  margin: 0;
  overflow: hidden;
  background: #fff;
  border: 2px solid;
  border-color: #404040 #fff #fff #404040;
  font: 20px/20px "Liberation Mono", "Courier New", monospace;
}
.vscroll {
  display: flex;
  flex-direction: column;
  width: 24px;
  padding-bottom: 2px;
  border-top: 2px solid #404040;
}
.sb {
  display: flex;
  align-items: center;
  justify-content: center;
  flex: none;
  width: 24px;
  height: 22px;
  border: 1px solid;
  border-color: #fff #404040 #404040 #fff;
  box-shadow: inset -1px -1px #808080;
}
.track {
  flex: 1;
  background: repeating-conic-gradient(#fff 0 25%, #d4d0c8 0 50%) 0 0/2px 2px;
}
.thumb {
  height: 11px;
  border: 1px solid;
  border-color: #fff #404040 #404040 #fff;
}
.tri-up,
.tri-down,
.tri-left,
.tri-right {
  border: 6px solid transparent;
}
.tri-up {
  border-top: 0;
  border-bottom-color: #808080;
}
.tri-down {
  border-bottom: 0;
}
.tri-left {
  border-left: 0;
  border-right-color: #808080;
}
.tri-right {
  border-right: 0;
  border-left-color: #808080;
}
.tri-up.black {
  border-bottom-color: #000;
}
.tri-down.black {
  border-top-color: #000;
}
.out-tabs {
  display: flex;
  height: 25px;
  padding: 1px 1px 0 2px;
}
.sheet {
  padding: 0 2px 2px;
  margin-right: -10px;
  background: #000;
  clip-path: polygon(0 0, 100% 0, calc(100% - 11px) 100%, 11px 100%);
}
.sheet span {
  display: block;
  height: 22px;
  padding: 0 19px;
  background: #d4d0c8;
  line-height: 22px;
  clip-path: polygon(0 0, 100% 0, calc(100% - 10px) 100%, 10px 100%);
}
.sheet.on {
  z-index: 1;
}
.sheet.on span {
  background: #fff;
}
.hscroll {
  display: flex;
  width: 549px;
  margin-left: auto;
}
.splitter {
  width: 7px;
  margin-right: 1px;
  border: 2px solid;
  border-color: #fff #404040 #404040 #fff;
}

/* status bar */
.status {
  display: flex;
  align-items: center;
  gap: 5px;
  height: 38px;
  padding: 0 5px 0 7px;
  border-top: 2px solid #808080;
}
.scell {
  height: 26px;
  border: 1px solid;
  border-color: #808080 #fff #fff #808080;
  line-height: 24px;
  white-space: nowrap;
}
.s1 {
  flex: 1;
  font-weight: bold;
  font-size: 17px;
}
.s2 {
  width: 304px;
}
.s3 {
  width: 230px;
  margin-right: 4px;
}
.stb {
  width: 27px;
  height: 28px;
}
.stb .icon,
.start .icon {
  display: block;
}
.stb.on {
  border: 2px solid;
  border-color: #606060 #fff #fff #606060;
}
.start {
  display: flex;
  align-items: center;
  gap: 2px;
}

/* taskbar */
.taskbar {
  display: flex;
  align-items: center;
  height: 41px;
  padding: 0 3px;
  border-top: 2px solid #fff;
}
.inicio,
.task {
  display: flex;
  align-items: center;
  gap: 3px;
  height: 33px;
  font: bold 16px/22px "Noto Sans", sans-serif;
  white-space: nowrap;
}
.inicio {
  width: 87px;
  padding-left: 4px;
  border: 2px solid;
  border-color: #fff #404040 #404040 #fff;
}
.taskbar .vline {
  margin: 0 3px 0 6px;
}
.nub {
  width: 5px;
  height: 28px;
  border: 2px solid;
  border-color: #fff #808080 #808080 #fff;
}
.quick {
  display: flex;
  gap: 11px;
  padding: 0 8px 0 9px;
}
.task {
  width: 242px;
  margin-left: 6px;
  padding-left: 5px;
  border: 2px solid;
  border-color: #404040 #fff #fff #404040;
  background: repeating-conic-gradient(#fff 0 25%, #d4d0c8 0 50%) 0 0/2px 2px;
}
.tray {
  display: flex;
  align-items: center;
  gap: 3px;
  width: 279px;
  height: 34px;
  margin-left: auto;
  padding-left: 5px;
  border: 1px solid;
  border-color: #808080 #fff #fff #808080;
}
.lang {
  width: 25px;
  height: 25px;
  background: #000080;
  color: #fff;
  line-height: 25px;
  text-align: center;
}
.tray time {
  margin-left: auto;
  padding-right: 26px;
}
```
